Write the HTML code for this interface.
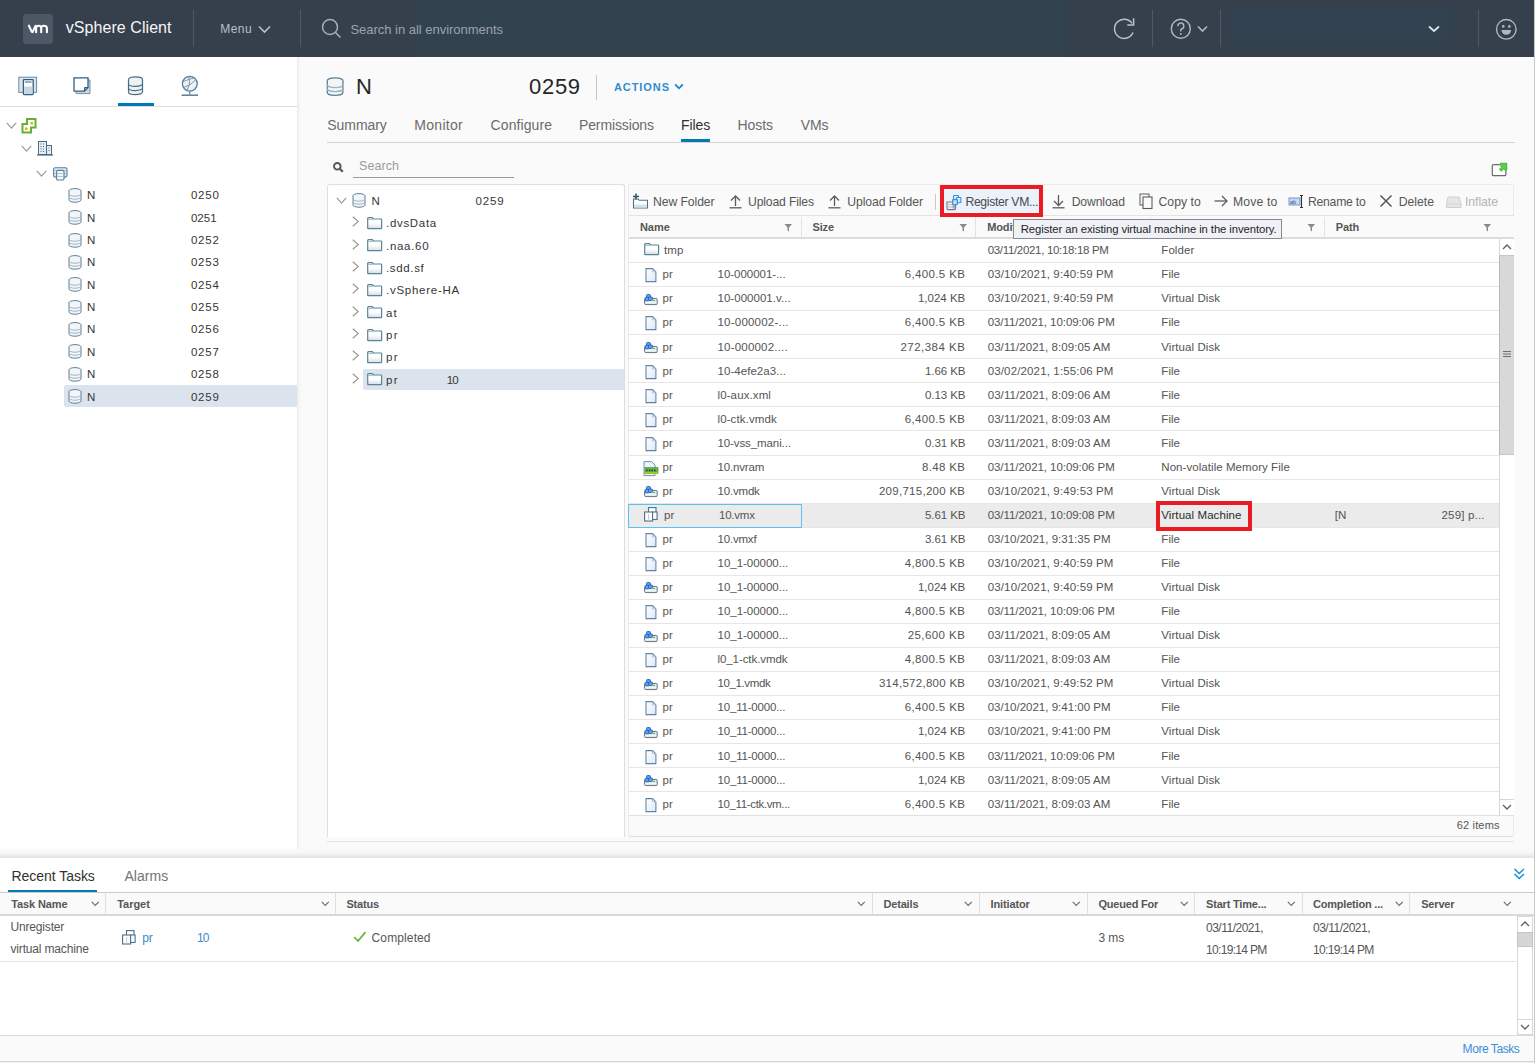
<!DOCTYPE html>
<html><head><meta charset="utf-8"><style>
html,body{margin:0;padding:0;width:1536px;height:1063px;overflow:hidden;background:#fafafa;}
body{position:relative;font-family:"Liberation Sans",sans-serif;}
.t{position:absolute;white-space:nowrap;}
svg{overflow:visible;}
</style></head><body>
<div style="position:absolute;left:0px;top:0px;width:1536px;height:1063px;background:#fafafa;"></div>
<div style="position:absolute;left:0px;top:0px;width:1534px;height:57px;background:#363f4c;"></div>
<div style="position:absolute;left:416px;top:0px;width:652px;height:57px;background:#32424f;"></div>
<div style="position:absolute;left:1534px;top:0px;width:1px;height:1063px;background:#c8c8c8;"></div>
<div style="position:absolute;left:1535px;top:0px;width:1px;height:1063px;background:#ffffff;"></div>
<div style="position:absolute;left:23px;top:14px;width:30px;height:30px;background:#4d5867;border-radius:3px;"></div>
<svg style="position:absolute;left:18px;top:10px" width="40" height="40" viewBox="0 0 40 40"><path d="M10.9,15.6 L13.7,21.6 Q14.2,22.6 14.8,21.6 L17.5,15.9" fill="none" stroke="#fff" stroke-width="2.1" stroke-linecap="round" stroke-linejoin="round"/><path d="M18.1,22.3 V18.2 Q18.1,15.7 20.6,15.7 Q23.2,15.7 23.2,18.2 V22.3 M23.2,18.2 Q23.2,15.7 25.7,15.7 Q28.9,15.7 28.9,18.2 V22.3" fill="none" stroke="#fff" stroke-width="2.1" stroke-linecap="round" stroke-linejoin="round"/></svg>
<div class="t" style="left:65.70px;top:19.86px;font-size:16px;line-height:16px;color:#f5f6f7;letter-spacing:0.067px;">vSphere Client</div>
<div style="position:absolute;left:193px;top:10px;width:1px;height:37px;background:#4e5966;"></div>
<div class="t" style="left:220.20px;top:23.24px;font-size:12px;line-height:12px;color:#b9c0c7;letter-spacing:0.486px;">Menu</div>
<svg style="position:absolute;left:258px;top:25px" width="14" height="9" viewBox="0 0 14 9"><polyline points="1,1.5 6.5,7 12,1.5" fill="none" stroke="#b9c0c7" stroke-width="1.6"/></svg>
<div style="position:absolute;left:299.5px;top:10px;width:1px;height:37px;background:#4e5966;"></div>
<svg style="position:absolute;left:321px;top:18px" width="21" height="21" viewBox="0 0 21 21"><circle cx="9" cy="9" r="7.5" fill="none" stroke="#a7b0b9" stroke-width="1.5"/><line x1="14.5" y1="14.5" x2="19.5" y2="19.5" stroke="#a7b0b9" stroke-width="1.5"/></svg>
<div class="t" style="left:350.40px;top:22.75px;font-size:13px;line-height:13px;color:#9aa4ae;letter-spacing:-0.021px;">Search in all environments</div>
<svg style="position:absolute;left:1113px;top:17px" width="24" height="24" viewBox="0 0 24 24"><path d="M20,15.5 A9.6,9.6 0 1 1 19.1,6.4" fill="none" stroke="#b9c1c9" stroke-width="1.5"/><polyline points="14.3,8 20.6,8 20.6,1.2" fill="none" stroke="#b9c1c9" stroke-width="1.5"/></svg>
<div style="position:absolute;left:1152px;top:10px;width:1px;height:37px;background:#4e5966;"></div>
<svg style="position:absolute;left:1170px;top:18px" width="22" height="22" viewBox="0 0 22 22"><circle cx="10.8" cy="10.8" r="9.5" fill="none" stroke="#b0b7bf" stroke-width="1.4"/><path d="M7.8,8.2 A3,3 0 1 1 11.5,11 L10.8,11.6 L10.8,13.5" fill="none" stroke="#b0b7bf" stroke-width="1.4"/><circle cx="10.8" cy="16" r="0.9" fill="#b0b7bf"/></svg>
<svg style="position:absolute;left:1197px;top:25px" width="12" height="8" viewBox="0 0 12 8"><polyline points="1,1.5 5.5,6 10,1.5" fill="none" stroke="#b0b7bf" stroke-width="1.6"/></svg>
<div style="position:absolute;left:1220px;top:10px;width:1px;height:37px;background:#4e5966;"></div>
<div style="position:absolute;left:1230px;top:9px;width:223px;height:36px;background:#334250;"></div>
<svg style="position:absolute;left:1428px;top:25px" width="13" height="8" viewBox="0 0 13 8"><polyline points="1,1.5 6,6 11,1.5" fill="none" stroke="#dfe3e7" stroke-width="1.7"/></svg>
<div style="position:absolute;left:1477.5px;top:10px;width:1px;height:37px;background:#4e5966;"></div>
<svg style="position:absolute;left:1495px;top:17.7px" width="23" height="23" viewBox="0 0 23 23"><circle cx="11.3" cy="11.3" r="9.8" fill="none" stroke="#b0b7bf" stroke-width="1.4"/><circle cx="8.3" cy="8.4" r="1.3" fill="#b0b7bf"/><circle cx="14.3" cy="8.4" r="1.3" fill="#b0b7bf"/><path d="M6.5,12 L16.1,12 A4.8,4.8 0 0 1 6.5,12 Z" fill="#b0b7bf"/></svg>
<div style="position:absolute;left:0px;top:57px;width:297px;height:798px;background:#ffffff;"></div>
<div style="position:absolute;left:297px;top:57px;width:1px;height:798px;background:#ececec;"></div>
<div style="position:absolute;left:298px;top:57px;width:1.5px;height:798px;background:#f4f4f4;"></div>
<svg style="position:absolute;left:18px;top:76px" width="20" height="20" viewBox="0 0 20 20"><rect x="0.8" y="1.2" width="17.8" height="15.2" fill="#dbe4eb" stroke="#6d8aa0" stroke-width="1"/><rect x="5.4" y="3.6" width="9.8" height="15" rx="0.8" fill="#fff" stroke="#2f5f86" stroke-width="1.3"/><rect x="6.2" y="10.5" width="8.2" height="7.4" fill="#c9d6e0"/><line x1="7" y1="6" x2="13.6" y2="6" stroke="#2f5f86" stroke-width="1"/></svg>
<svg style="position:absolute;left:73px;top:77px" width="18" height="18" viewBox="0 0 18 18"><path d="M3,3 H17 V16.6 H3 Z" fill="#ccd6df" stroke="#6d8aa0" stroke-width="0.9"/><path d="M1,0.8 H15 V10.5 L11.5,14.2 H1 Z" fill="#fff" stroke="#2f5f86" stroke-width="1.3"/><path d="M15,10.5 L11.5,14.2 V10.5 Z" fill="#8ea4b6" stroke="#2f5f86" stroke-width="1"/></svg>
<svg style="position:absolute;left:127px;top:76px" width="18" height="20" viewBox="0 0 18 20"><ellipse cx="8.5" cy="3.5" rx="7" ry="2.6" fill="#eef2f5" stroke="#4a6b85" stroke-width="1.2"/><path d="M1.5,3.5 V16 A7,2.6 0 0 0 15.5,16 V3.5" fill="#eef2f5" stroke="#4a6b85" stroke-width="1.2"/><path d="M1.5,7.8 A7,2.6 0 0 0 15.5,7.8 M1.5,12 A7,2.6 0 0 0 15.5,12" fill="none" stroke="#4a6b85" stroke-width="1.1"/></svg>
<svg style="position:absolute;left:181px;top:75px" width="18" height="22" viewBox="0 0 18 22"><circle cx="8.8" cy="8.7" r="7.4" fill="#eef2f5" stroke="#5a7d97" stroke-width="1.3"/><path d="M2.5,6.5 Q8,4 13.5,2.8 M2.5,12.5 Q9,11 14.5,5 M6,16 Q10,9 8,1.5" fill="none" stroke="#7b97ab" stroke-width="1"/><line x1="8.8" y1="16.5" x2="8.8" y2="19.5" stroke="#5a7d97" stroke-width="1.2"/><line x1="0.6" y1="20.2" x2="17" y2="20.2" stroke="#5a7d97" stroke-width="1.5"/></svg>
<div style="position:absolute;left:118px;top:103px;width:36px;height:3px;background:#0079b8;"></div>
<div style="position:absolute;left:0px;top:106px;width:297px;height:1px;background:#dcdcdc;"></div>
<svg style="position:absolute;left:5.5px;top:122.4px" width="11" height="7" viewBox="0 0 11 7"><polyline points="0.8,0.8 5.5,6.2 10.2,0.8" fill="none" stroke="#9a9a9a" stroke-width="1.2"/></svg>
<svg style="position:absolute;left:21px;top:118px" width="16" height="16" viewBox="0 0 16 16"><path d="M6,1 H14.5 V9.5 H10 V14.5 H1.5 V6 H6 Z" fill="#fff" stroke="#62b22f" stroke-width="2"/><rect x="9.5" y="4" width="2.5" height="2.5" fill="#f5a623"/><rect x="4" y="9.5" width="2.5" height="2.5" fill="#f5a623"/></svg>
<svg style="position:absolute;left:20.5px;top:144.5px" width="11" height="7" viewBox="0 0 11 7"><polyline points="0.8,0.8 5.5,6.2 10.2,0.8" fill="none" stroke="#9a9a9a" stroke-width="1.2"/></svg>
<svg style="position:absolute;left:37px;top:140px" width="16" height="16" viewBox="0 0 16 16"><rect x="1.5" y="1.5" width="8" height="13" fill="#e8eef3" stroke="#4a6b85" stroke-width="1"/><rect x="9.5" y="5.5" width="5" height="9" fill="#e8eef3" stroke="#4a6b85" stroke-width="1"/><path d="M3.5,4 h1 M6,4 h1 M3.5,6.5 h1 M6,6.5 h1 M3.5,9 h1 M6,9 h1 M3.5,11.5 h1 M6,11.5 h1 M11.5,8 h1 M11.5,10.5 h1" stroke="#4a6b85" stroke-width="1"/><line x1="0" y1="15" x2="16" y2="15" stroke="#4a6b85" stroke-width="1.2"/></svg>
<svg style="position:absolute;left:36px;top:169.5px" width="11" height="7" viewBox="0 0 11 7"><polyline points="0.8,0.8 5.5,6.2 10.2,0.8" fill="none" stroke="#9a9a9a" stroke-width="1.2"/></svg>
<svg style="position:absolute;left:53px;top:166.5px" width="15" height="15" viewBox="0 0 15 15"><rect x="0.6" y="0.7" width="13.4" height="9.4" rx="1.6" fill="#e4ebf0" stroke="#557f9b" stroke-width="1.1"/><path d="M1.5,3.6 H13 M1.5,6.6 H13" stroke="#a7bccb" stroke-width="0.9"/><rect x="3.6" y="3.4" width="7.4" height="9.6" rx="1.3" fill="#f4f7f9" stroke="#557f9b" stroke-width="1.1"/><path d="M4.4,6.5 H10.2 M4.4,9.5 H10.2" stroke="#a7bccb" stroke-width="0.9"/></svg>
<div style="position:absolute;left:63.5px;top:385px;width:233.5px;height:22px;background:#dbe3ec;border-radius:2px 0 0 2px;"></div>
<svg style="position:absolute;left:67.5px;top:187.89999999999998px" width="15.0" height="15.0" viewBox="0 0 15 15"><ellipse cx="7" cy="2.8" rx="6" ry="2.2" fill="#f3f6f8" stroke="#5f8197" stroke-width="1"/><path d="M1,2.8 V12 A6,2.2 0 0 0 13,12 V2.8" fill="#f3f6f8" stroke="#5f8197" stroke-width="1"/><path d="M1,6 A6,2.2 0 0 0 13,6 M1,9 A6,2.2 0 0 0 13,9" fill="none" stroke="#9fb4c2" stroke-width="1"/></svg>
<div class="t" style="left:86.90px;top:190.17px;font-size:11.5px;line-height:11.5px;color:#363636;letter-spacing:0.915px;">N</div>
<div class="t" style="left:190.90px;top:190.17px;font-size:11.5px;line-height:11.5px;color:#363636;letter-spacing:0.799px;">0250</div>
<svg style="position:absolute;left:67.5px;top:210.26999999999998px" width="15.0" height="15.0" viewBox="0 0 15 15"><ellipse cx="7" cy="2.8" rx="6" ry="2.2" fill="#f3f6f8" stroke="#5f8197" stroke-width="1"/><path d="M1,2.8 V12 A6,2.2 0 0 0 13,12 V2.8" fill="#f3f6f8" stroke="#5f8197" stroke-width="1"/><path d="M1,6 A6,2.2 0 0 0 13,6 M1,9 A6,2.2 0 0 0 13,9" fill="none" stroke="#9fb4c2" stroke-width="1"/></svg>
<div class="t" style="left:86.90px;top:212.54px;font-size:11.5px;line-height:11.5px;color:#363636;letter-spacing:0.915px;">N</div>
<div class="t" style="left:190.90px;top:212.54px;font-size:11.5px;line-height:11.5px;color:#363636;letter-spacing:0.034px;">0251</div>
<svg style="position:absolute;left:67.5px;top:232.64px" width="15.0" height="15.0" viewBox="0 0 15 15"><ellipse cx="7" cy="2.8" rx="6" ry="2.2" fill="#f3f6f8" stroke="#5f8197" stroke-width="1"/><path d="M1,2.8 V12 A6,2.2 0 0 0 13,12 V2.8" fill="#f3f6f8" stroke="#5f8197" stroke-width="1"/><path d="M1,6 A6,2.2 0 0 0 13,6 M1,9 A6,2.2 0 0 0 13,9" fill="none" stroke="#9fb4c2" stroke-width="1"/></svg>
<div class="t" style="left:86.90px;top:234.91px;font-size:11.5px;line-height:11.5px;color:#363636;letter-spacing:0.915px;">N</div>
<div class="t" style="left:190.90px;top:234.91px;font-size:11.5px;line-height:11.5px;color:#363636;letter-spacing:0.799px;">0252</div>
<svg style="position:absolute;left:67.5px;top:255.01px" width="15.0" height="15.0" viewBox="0 0 15 15"><ellipse cx="7" cy="2.8" rx="6" ry="2.2" fill="#f3f6f8" stroke="#5f8197" stroke-width="1"/><path d="M1,2.8 V12 A6,2.2 0 0 0 13,12 V2.8" fill="#f3f6f8" stroke="#5f8197" stroke-width="1"/><path d="M1,6 A6,2.2 0 0 0 13,6 M1,9 A6,2.2 0 0 0 13,9" fill="none" stroke="#9fb4c2" stroke-width="1"/></svg>
<div class="t" style="left:86.90px;top:257.28px;font-size:11.5px;line-height:11.5px;color:#363636;letter-spacing:0.915px;">N</div>
<div class="t" style="left:190.90px;top:257.28px;font-size:11.5px;line-height:11.5px;color:#363636;letter-spacing:0.799px;">0253</div>
<svg style="position:absolute;left:67.5px;top:277.38px" width="15.0" height="15.0" viewBox="0 0 15 15"><ellipse cx="7" cy="2.8" rx="6" ry="2.2" fill="#f3f6f8" stroke="#5f8197" stroke-width="1"/><path d="M1,2.8 V12 A6,2.2 0 0 0 13,12 V2.8" fill="#f3f6f8" stroke="#5f8197" stroke-width="1"/><path d="M1,6 A6,2.2 0 0 0 13,6 M1,9 A6,2.2 0 0 0 13,9" fill="none" stroke="#9fb4c2" stroke-width="1"/></svg>
<div class="t" style="left:86.90px;top:279.65px;font-size:11.5px;line-height:11.5px;color:#363636;letter-spacing:0.915px;">N</div>
<div class="t" style="left:190.90px;top:279.65px;font-size:11.5px;line-height:11.5px;color:#363636;letter-spacing:0.799px;">0254</div>
<svg style="position:absolute;left:67.5px;top:299.75px" width="15.0" height="15.0" viewBox="0 0 15 15"><ellipse cx="7" cy="2.8" rx="6" ry="2.2" fill="#f3f6f8" stroke="#5f8197" stroke-width="1"/><path d="M1,2.8 V12 A6,2.2 0 0 0 13,12 V2.8" fill="#f3f6f8" stroke="#5f8197" stroke-width="1"/><path d="M1,6 A6,2.2 0 0 0 13,6 M1,9 A6,2.2 0 0 0 13,9" fill="none" stroke="#9fb4c2" stroke-width="1"/></svg>
<div class="t" style="left:86.90px;top:302.02px;font-size:11.5px;line-height:11.5px;color:#363636;letter-spacing:0.915px;">N</div>
<div class="t" style="left:190.90px;top:302.02px;font-size:11.5px;line-height:11.5px;color:#363636;letter-spacing:0.799px;">0255</div>
<svg style="position:absolute;left:67.5px;top:322.11999999999995px" width="15.0" height="15.0" viewBox="0 0 15 15"><ellipse cx="7" cy="2.8" rx="6" ry="2.2" fill="#f3f6f8" stroke="#5f8197" stroke-width="1"/><path d="M1,2.8 V12 A6,2.2 0 0 0 13,12 V2.8" fill="#f3f6f8" stroke="#5f8197" stroke-width="1"/><path d="M1,6 A6,2.2 0 0 0 13,6 M1,9 A6,2.2 0 0 0 13,9" fill="none" stroke="#9fb4c2" stroke-width="1"/></svg>
<div class="t" style="left:86.90px;top:324.39px;font-size:11.5px;line-height:11.5px;color:#363636;letter-spacing:0.915px;">N</div>
<div class="t" style="left:190.90px;top:324.39px;font-size:11.5px;line-height:11.5px;color:#363636;letter-spacing:0.799px;">0256</div>
<svg style="position:absolute;left:67.5px;top:344.48999999999995px" width="15.0" height="15.0" viewBox="0 0 15 15"><ellipse cx="7" cy="2.8" rx="6" ry="2.2" fill="#f3f6f8" stroke="#5f8197" stroke-width="1"/><path d="M1,2.8 V12 A6,2.2 0 0 0 13,12 V2.8" fill="#f3f6f8" stroke="#5f8197" stroke-width="1"/><path d="M1,6 A6,2.2 0 0 0 13,6 M1,9 A6,2.2 0 0 0 13,9" fill="none" stroke="#9fb4c2" stroke-width="1"/></svg>
<div class="t" style="left:86.90px;top:346.76px;font-size:11.5px;line-height:11.5px;color:#363636;letter-spacing:0.915px;">N</div>
<div class="t" style="left:190.90px;top:346.76px;font-size:11.5px;line-height:11.5px;color:#363636;letter-spacing:0.799px;">0257</div>
<svg style="position:absolute;left:67.5px;top:366.85999999999996px" width="15.0" height="15.0" viewBox="0 0 15 15"><ellipse cx="7" cy="2.8" rx="6" ry="2.2" fill="#f3f6f8" stroke="#5f8197" stroke-width="1"/><path d="M1,2.8 V12 A6,2.2 0 0 0 13,12 V2.8" fill="#f3f6f8" stroke="#5f8197" stroke-width="1"/><path d="M1,6 A6,2.2 0 0 0 13,6 M1,9 A6,2.2 0 0 0 13,9" fill="none" stroke="#9fb4c2" stroke-width="1"/></svg>
<div class="t" style="left:86.90px;top:369.13px;font-size:11.5px;line-height:11.5px;color:#363636;letter-spacing:0.915px;">N</div>
<div class="t" style="left:190.90px;top:369.13px;font-size:11.5px;line-height:11.5px;color:#363636;letter-spacing:0.799px;">0258</div>
<svg style="position:absolute;left:67.5px;top:389.22999999999996px" width="15.0" height="15.0" viewBox="0 0 15 15"><ellipse cx="7" cy="2.8" rx="6" ry="2.2" fill="#f3f6f8" stroke="#5f8197" stroke-width="1"/><path d="M1,2.8 V12 A6,2.2 0 0 0 13,12 V2.8" fill="#f3f6f8" stroke="#5f8197" stroke-width="1"/><path d="M1,6 A6,2.2 0 0 0 13,6 M1,9 A6,2.2 0 0 0 13,9" fill="none" stroke="#9fb4c2" stroke-width="1"/></svg>
<div class="t" style="left:86.90px;top:391.50px;font-size:11.5px;line-height:11.5px;color:#363636;letter-spacing:0.915px;">N</div>
<div class="t" style="left:190.90px;top:391.50px;font-size:11.5px;line-height:11.5px;color:#363636;letter-spacing:0.799px;">0259</div>
<svg style="position:absolute;left:326.3px;top:77px" width="19.5" height="19.5" viewBox="0 0 15 15"><ellipse cx="7" cy="2.8" rx="6" ry="2.2" fill="#f3f6f8" stroke="#5f8197" stroke-width="1"/><path d="M1,2.8 V12 A6,2.2 0 0 0 13,12 V2.8" fill="#f3f6f8" stroke="#5f8197" stroke-width="1"/><path d="M1,6 A6,2.2 0 0 0 13,6 M1,9 A6,2.2 0 0 0 13,9" fill="none" stroke="#9fb4c2" stroke-width="1"/></svg>
<div class="t" style="left:356.00px;top:75.88px;font-size:22px;line-height:22px;color:#262626;letter-spacing:-0.428px;">N</div>
<div class="t" style="left:529.00px;top:75.88px;font-size:22px;line-height:22px;color:#262626;letter-spacing:0.705px;">0259</div>
<div style="position:absolute;left:596px;top:75px;width:1px;height:25px;background:#c7c7c7;"></div>
<div class="t" style="left:614.00px;top:82.19px;font-size:11px;line-height:11px;color:#2e8fd0;letter-spacing:0.911px;font-weight:bold;">ACTIONS</div>
<svg style="position:absolute;left:673.5px;top:83px" width="10" height="8" viewBox="0 0 10 8"><polyline points="1.2,1.5 5,5.3 8.8,1.5" fill="none" stroke="#1c87c6" stroke-width="1.8"/></svg>
<div class="t" style="left:327.30px;top:118.35px;font-size:14px;line-height:14px;color:#6b6b6b;letter-spacing:-0.068px;">Summary</div>
<div class="t" style="left:414.30px;top:118.35px;font-size:14px;line-height:14px;color:#6b6b6b;letter-spacing:0.291px;">Monitor</div>
<div class="t" style="left:490.60px;top:118.35px;font-size:14px;line-height:14px;color:#6b6b6b;letter-spacing:0.091px;">Configure</div>
<div class="t" style="left:579.00px;top:118.35px;font-size:14px;line-height:14px;color:#6b6b6b;letter-spacing:-0.129px;">Permissions</div>
<div class="t" style="left:681.10px;top:118.35px;font-size:14px;line-height:14px;color:#303030;letter-spacing:-0.128px;">Files</div>
<div class="t" style="left:737.40px;top:118.35px;font-size:14px;line-height:14px;color:#6b6b6b;letter-spacing:-0.013px;">Hosts</div>
<div class="t" style="left:800.70px;top:118.35px;font-size:14px;line-height:14px;color:#6b6b6b;letter-spacing:-0.093px;">VMs</div>
<div style="position:absolute;left:327px;top:142px;width:1188px;height:1px;background:#d4d4d4;"></div>
<div style="position:absolute;left:681px;top:139px;width:28.5px;height:3px;background:#0079b8;"></div>
<svg style="position:absolute;left:333px;top:162px" width="11" height="11" viewBox="0 0 11 11"><circle cx="4.3" cy="4.3" r="3.3" fill="none" stroke="#565656" stroke-width="1.9"/><line x1="6.8" y1="6.8" x2="9.8" y2="9.8" stroke="#565656" stroke-width="2.2"/></svg>
<div class="t" style="left:359.00px;top:159.82px;font-size:12.5px;line-height:12.5px;color:#9a9a9a;letter-spacing:0.066px;">Search</div>
<div style="position:absolute;left:353px;top:177px;width:161px;height:1px;background:#9a9a9a;"></div>
<svg style="position:absolute;left:1491px;top:162px" width="18" height="16" viewBox="0 0 18 16"><path d="M8.5,2.6 H2.6 Q1.3,2.6 1.3,3.9 V12.4 Q1.3,13.7 2.6,13.7 H13.6 Q14.9,13.7 14.9,12.4 V8.6" fill="#fff" stroke="#6a6a6a" stroke-width="1.2"/><path d="M9.2,1.3 H15.8 V8 L14.3,8.6 L12.6,7 L10.2,9.2 L8.4,7.3 L10.7,5 L9,3.3 Z" fill="#5ccf4a" stroke="#1fa012" stroke-width="0.7"/></svg>
<div style="position:absolute;left:327px;top:184px;width:297.5px;height:653px;background:#ffffff;border:1px solid #dfdfdf;border-bottom:none;border-radius:3px 3px 0 0;box-sizing:border-box;"></div>
<svg style="position:absolute;left:335.6px;top:197px" width="11" height="7" viewBox="0 0 11 7"><polyline points="0.8,0.8 5.5,6.2 10.2,0.8" fill="none" stroke="#9a9a9a" stroke-width="1.2"/></svg>
<svg style="position:absolute;left:351.5px;top:193px" width="15.0" height="15.0" viewBox="0 0 15 15"><ellipse cx="7" cy="2.8" rx="6" ry="2.2" fill="#f3f6f8" stroke="#5f8197" stroke-width="1"/><path d="M1,2.8 V12 A6,2.2 0 0 0 13,12 V2.8" fill="#f3f6f8" stroke="#5f8197" stroke-width="1"/><path d="M1,6 A6,2.2 0 0 0 13,6 M1,9 A6,2.2 0 0 0 13,9" fill="none" stroke="#9fb4c2" stroke-width="1"/></svg>
<div class="t" style="left:371.50px;top:195.87px;font-size:11.5px;line-height:11.5px;color:#363636;letter-spacing:0.915px;">N</div>
<div class="t" style="left:475.60px;top:195.87px;font-size:11.5px;line-height:11.5px;color:#363636;letter-spacing:0.799px;">0259</div>
<div style="position:absolute;left:362.8px;top:368.7px;width:261.2px;height:21.5px;background:#dbe3ec;border-radius:2px 0 0 2px;"></div>
<svg style="position:absolute;left:352.3px;top:216.4px" width="7" height="11" viewBox="0 0 7 11"><polyline points="0.8,0.8 6.2,5.5 0.8,10.2" fill="none" stroke="#9a9a9a" stroke-width="1.2"/></svg>
<svg style="position:absolute;left:366.5px;top:216.9px" width="16" height="13" viewBox="0 0 16 13"><defs><linearGradient id="fdg" x1="0" y1="0" x2="0" y2="1"><stop offset="0.5" stop-color="#ffffff"/><stop offset="1" stop-color="#d3dde5"/></linearGradient></defs><path d="M0.7,2.6 V1.4 Q0.7,0.7 1.4,0.7 H5 Q5.8,0.7 6,1.6 L6.2,2 H14 Q14.6,2 14.6,2.6 V11.2 Q14.6,11.7 14,11.7 H1.3 Q0.7,11.7 0.7,11.2 Z" fill="url(#fdg)" stroke="#5a8598" stroke-width="1.2"/><path d="M1.2,2.4 H5.6" stroke="#a9c0cc" stroke-width="1.2"/></svg>
<div class="t" style="left:386.00px;top:218.37px;font-size:11.5px;line-height:11.5px;color:#363636;letter-spacing:0.692px;">.dvsData</div>
<svg style="position:absolute;left:352.3px;top:238.73000000000002px" width="7" height="11" viewBox="0 0 7 11"><polyline points="0.8,0.8 6.2,5.5 0.8,10.2" fill="none" stroke="#9a9a9a" stroke-width="1.2"/></svg>
<svg style="position:absolute;left:366.5px;top:239.23000000000002px" width="16" height="13" viewBox="0 0 16 13"><defs><linearGradient id="fdg" x1="0" y1="0" x2="0" y2="1"><stop offset="0.5" stop-color="#ffffff"/><stop offset="1" stop-color="#d3dde5"/></linearGradient></defs><path d="M0.7,2.6 V1.4 Q0.7,0.7 1.4,0.7 H5 Q5.8,0.7 6,1.6 L6.2,2 H14 Q14.6,2 14.6,2.6 V11.2 Q14.6,11.7 14,11.7 H1.3 Q0.7,11.7 0.7,11.2 Z" fill="url(#fdg)" stroke="#5a8598" stroke-width="1.2"/><path d="M1.2,2.4 H5.6" stroke="#a9c0cc" stroke-width="1.2"/></svg>
<div class="t" style="left:386.00px;top:240.70px;font-size:11.5px;line-height:11.5px;color:#363636;letter-spacing:0.707px;">.naa.60</div>
<svg style="position:absolute;left:352.3px;top:261.06px" width="7" height="11" viewBox="0 0 7 11"><polyline points="0.8,0.8 6.2,5.5 0.8,10.2" fill="none" stroke="#9a9a9a" stroke-width="1.2"/></svg>
<svg style="position:absolute;left:366.5px;top:261.56px" width="16" height="13" viewBox="0 0 16 13"><defs><linearGradient id="fdg" x1="0" y1="0" x2="0" y2="1"><stop offset="0.5" stop-color="#ffffff"/><stop offset="1" stop-color="#d3dde5"/></linearGradient></defs><path d="M0.7,2.6 V1.4 Q0.7,0.7 1.4,0.7 H5 Q5.8,0.7 6,1.6 L6.2,2 H14 Q14.6,2 14.6,2.6 V11.2 Q14.6,11.7 14,11.7 H1.3 Q0.7,11.7 0.7,11.2 Z" fill="url(#fdg)" stroke="#5a8598" stroke-width="1.2"/><path d="M1.2,2.4 H5.6" stroke="#a9c0cc" stroke-width="1.2"/></svg>
<div class="t" style="left:386.00px;top:263.03px;font-size:11.5px;line-height:11.5px;color:#363636;letter-spacing:0.649px;">.sdd.sf</div>
<svg style="position:absolute;left:352.3px;top:283.39px" width="7" height="11" viewBox="0 0 7 11"><polyline points="0.8,0.8 6.2,5.5 0.8,10.2" fill="none" stroke="#9a9a9a" stroke-width="1.2"/></svg>
<svg style="position:absolute;left:366.5px;top:283.89px" width="16" height="13" viewBox="0 0 16 13"><defs><linearGradient id="fdg" x1="0" y1="0" x2="0" y2="1"><stop offset="0.5" stop-color="#ffffff"/><stop offset="1" stop-color="#d3dde5"/></linearGradient></defs><path d="M0.7,2.6 V1.4 Q0.7,0.7 1.4,0.7 H5 Q5.8,0.7 6,1.6 L6.2,2 H14 Q14.6,2 14.6,2.6 V11.2 Q14.6,11.7 14,11.7 H1.3 Q0.7,11.7 0.7,11.2 Z" fill="url(#fdg)" stroke="#5a8598" stroke-width="1.2"/><path d="M1.2,2.4 H5.6" stroke="#a9c0cc" stroke-width="1.2"/></svg>
<div class="t" style="left:386.00px;top:285.36px;font-size:11.5px;line-height:11.5px;color:#363636;letter-spacing:0.735px;">.vSphere-HA</div>
<svg style="position:absolute;left:352.3px;top:305.72px" width="7" height="11" viewBox="0 0 7 11"><polyline points="0.8,0.8 6.2,5.5 0.8,10.2" fill="none" stroke="#9a9a9a" stroke-width="1.2"/></svg>
<svg style="position:absolute;left:366.5px;top:306.22px" width="16" height="13" viewBox="0 0 16 13"><defs><linearGradient id="fdg" x1="0" y1="0" x2="0" y2="1"><stop offset="0.5" stop-color="#ffffff"/><stop offset="1" stop-color="#d3dde5"/></linearGradient></defs><path d="M0.7,2.6 V1.4 Q0.7,0.7 1.4,0.7 H5 Q5.8,0.7 6,1.6 L6.2,2 H14 Q14.6,2 14.6,2.6 V11.2 Q14.6,11.7 14,11.7 H1.3 Q0.7,11.7 0.7,11.2 Z" fill="url(#fdg)" stroke="#5a8598" stroke-width="1.2"/><path d="M1.2,2.4 H5.6" stroke="#a9c0cc" stroke-width="1.2"/></svg>
<div class="t" style="left:386.00px;top:307.69px;font-size:11.5px;line-height:11.5px;color:#363636;letter-spacing:1.165px;">at</div>
<svg style="position:absolute;left:352.3px;top:328.05px" width="7" height="11" viewBox="0 0 7 11"><polyline points="0.8,0.8 6.2,5.5 0.8,10.2" fill="none" stroke="#9a9a9a" stroke-width="1.2"/></svg>
<svg style="position:absolute;left:366.5px;top:328.55px" width="16" height="13" viewBox="0 0 16 13"><defs><linearGradient id="fdg" x1="0" y1="0" x2="0" y2="1"><stop offset="0.5" stop-color="#ffffff"/><stop offset="1" stop-color="#d3dde5"/></linearGradient></defs><path d="M0.7,2.6 V1.4 Q0.7,0.7 1.4,0.7 H5 Q5.8,0.7 6,1.6 L6.2,2 H14 Q14.6,2 14.6,2.6 V11.2 Q14.6,11.7 14,11.7 H1.3 Q0.7,11.7 0.7,11.2 Z" fill="url(#fdg)" stroke="#5a8598" stroke-width="1.2"/><path d="M1.2,2.4 H5.6" stroke="#a9c0cc" stroke-width="1.2"/></svg>
<div class="t" style="left:386.00px;top:330.02px;font-size:11.5px;line-height:11.5px;color:#363636;letter-spacing:1.247px;">pr</div>
<svg style="position:absolute;left:352.3px;top:350.38px" width="7" height="11" viewBox="0 0 7 11"><polyline points="0.8,0.8 6.2,5.5 0.8,10.2" fill="none" stroke="#9a9a9a" stroke-width="1.2"/></svg>
<svg style="position:absolute;left:366.5px;top:350.88px" width="16" height="13" viewBox="0 0 16 13"><defs><linearGradient id="fdg" x1="0" y1="0" x2="0" y2="1"><stop offset="0.5" stop-color="#ffffff"/><stop offset="1" stop-color="#d3dde5"/></linearGradient></defs><path d="M0.7,2.6 V1.4 Q0.7,0.7 1.4,0.7 H5 Q5.8,0.7 6,1.6 L6.2,2 H14 Q14.6,2 14.6,2.6 V11.2 Q14.6,11.7 14,11.7 H1.3 Q0.7,11.7 0.7,11.2 Z" fill="url(#fdg)" stroke="#5a8598" stroke-width="1.2"/><path d="M1.2,2.4 H5.6" stroke="#a9c0cc" stroke-width="1.2"/></svg>
<div class="t" style="left:386.00px;top:352.35px;font-size:11.5px;line-height:11.5px;color:#363636;letter-spacing:1.247px;">pr</div>
<svg style="position:absolute;left:352.3px;top:372.71000000000004px" width="7" height="11" viewBox="0 0 7 11"><polyline points="0.8,0.8 6.2,5.5 0.8,10.2" fill="none" stroke="#9a9a9a" stroke-width="1.2"/></svg>
<svg style="position:absolute;left:366.5px;top:373.21000000000004px" width="16" height="13" viewBox="0 0 16 13"><defs><linearGradient id="fdg" x1="0" y1="0" x2="0" y2="1"><stop offset="0.5" stop-color="#ffffff"/><stop offset="1" stop-color="#d3dde5"/></linearGradient></defs><path d="M0.7,2.6 V1.4 Q0.7,0.7 1.4,0.7 H5 Q5.8,0.7 6,1.6 L6.2,2 H14 Q14.6,2 14.6,2.6 V11.2 Q14.6,11.7 14,11.7 H1.3 Q0.7,11.7 0.7,11.2 Z" fill="url(#fdg)" stroke="#5a8598" stroke-width="1.2"/><path d="M1.2,2.4 H5.6" stroke="#a9c0cc" stroke-width="1.2"/></svg>
<div class="t" style="left:386.00px;top:374.68px;font-size:11.5px;line-height:11.5px;color:#363636;letter-spacing:1.247px;">pr</div>
<div class="t" style="left:446.70px;top:374.68px;font-size:11.5px;line-height:11.5px;color:#363636;letter-spacing:-0.730px;">10</div>
<div style="position:absolute;left:627.5px;top:184px;width:886.5px;height:653px;background:#fafafa;border:1px solid #ececec;border-bottom:1px solid #dedede;border-radius:0 0 3px 3px;box-sizing:border-box;"></div>
<svg style="position:absolute;left:632px;top:193px" width="17" height="16" viewBox="0 0 17 16"><path d="M1.5,6 H6 L7.3,7.3 H15.5 V15 H1.5 Z" fill="#fff" stroke="#4b7189" stroke-width="1.1"/><rect x="2.2" y="11.5" width="12.6" height="3" fill="#d6e2ea"/><path d="M4,0.5 V6.5 M1,3.5 H7" stroke="#2f4f6a" stroke-width="1.5"/></svg>
<div class="t" style="left:653.00px;top:195.87px;font-size:12.2px;line-height:12.2px;color:#565656;letter-spacing:-0.080px;">New Folder</div>
<svg style="position:absolute;left:729px;top:194px" width="14" height="15" viewBox="0 0 14 15"><polyline points="2,6.5 6.5,2 11,6.5" fill="none" stroke="#5b5b5b" stroke-width="1.3"/><line x1="6.5" y1="2" x2="6.5" y2="12" stroke="#5b5b5b" stroke-width="1.3"/><line x1="0.5" y1="13.8" x2="12.5" y2="13.8" stroke="#5b5b5b" stroke-width="1.3"/></svg>
<div class="t" style="left:748.00px;top:195.87px;font-size:12.2px;line-height:12.2px;color:#565656;letter-spacing:-0.153px;">Upload Files</div>
<svg style="position:absolute;left:828px;top:194px" width="14" height="15" viewBox="0 0 14 15"><polyline points="2,6.5 6.5,2 11,6.5" fill="none" stroke="#5b5b5b" stroke-width="1.3"/><line x1="6.5" y1="2" x2="6.5" y2="12" stroke="#5b5b5b" stroke-width="1.3"/><line x1="0.5" y1="13.8" x2="12.5" y2="13.8" stroke="#5b5b5b" stroke-width="1.3"/></svg>
<div class="t" style="left:847.30px;top:195.87px;font-size:12.2px;line-height:12.2px;color:#565656;letter-spacing:-0.074px;">Upload Folder</div>
<div style="position:absolute;left:934.5px;top:193.5px;width:1px;height:16px;background:#c9c9c9;"></div>
<div style="position:absolute;left:944px;top:189px;width:95px;height:23px;background:#ebf2fb;"></div>
<svg style="position:absolute;left:946px;top:194px" width="17" height="17" viewBox="0 0 17 17"><path d="M1,8 V14.6 Q1,15.6 2,15.6 H8.6 Q9.6,15.6 9.6,14.6 V8 Z" fill="#f2f2f2" stroke="#7a7a7a" stroke-width="1.1"/><path d="M1.5,10.6 H9 M1.5,13 H9" stroke="#bdbdbd" stroke-width="1"/><rect x="7.5" y="1.5" width="5" height="4.6" rx="0.8" fill="#d2ebfb" stroke="#3a8ee0" stroke-width="1.1"/><rect x="10.6" y="3.5" width="4.3" height="5.2" rx="0.8" fill="#d2ebfb" stroke="#3a8ee0" stroke-width="1.1"/><rect x="6.6" y="5.6" width="4.8" height="5" rx="0.8" fill="#c6e3fa" stroke="#3a8ee0" stroke-width="1.2"/><rect x="6.6" y="10.6" width="2.5" height="4" fill="#6e9fd0" opacity="0.7"/></svg>
<div class="t" style="left:965.40px;top:195.87px;font-size:12.2px;line-height:12.2px;color:#4a4a4a;letter-spacing:-0.315px;">Register VM...</div>
<svg style="position:absolute;left:1052px;top:194px" width="14" height="15" viewBox="0 0 14 15"><polyline points="2,7 6.5,11.5 11,7" fill="none" stroke="#5b5b5b" stroke-width="1.3"/><line x1="6.5" y1="1" x2="6.5" y2="11.5" stroke="#5b5b5b" stroke-width="1.3"/><line x1="0.5" y1="13.8" x2="12.5" y2="13.8" stroke="#5b5b5b" stroke-width="1.3"/></svg>
<div class="t" style="left:1071.70px;top:195.87px;font-size:12.2px;line-height:12.2px;color:#565656;letter-spacing:-0.123px;">Download</div>
<svg style="position:absolute;left:1139px;top:193px" width="15" height="17" viewBox="0 0 15 17"><rect x="1" y="1" width="9" height="11" fill="none" stroke="#5b5b5b" stroke-width="1"/><rect x="4" y="4" width="9" height="11.5" fill="#fafafa" stroke="#5b5b5b" stroke-width="1.1"/></svg>
<div class="t" style="left:1158.50px;top:195.87px;font-size:12.2px;line-height:12.2px;color:#565656;letter-spacing:0.033px;">Copy to</div>
<svg style="position:absolute;left:1214px;top:195px" width="15" height="12" viewBox="0 0 15 12"><line x1="0.5" y1="6" x2="13" y2="6" stroke="#5b5b5b" stroke-width="1.3"/><polyline points="8,1 13,6 8,11" fill="none" stroke="#5b5b5b" stroke-width="1.3"/></svg>
<div class="t" style="left:1233.00px;top:195.87px;font-size:12.2px;line-height:12.2px;color:#565656;letter-spacing:0.140px;">Move to</div>
<svg style="position:absolute;left:1288px;top:194px" width="17" height="15" viewBox="0 0 17 15"><rect x="1" y="4" width="11" height="7" fill="#c9d9f1" stroke="#6a8fc9" stroke-width="0.9"/><text x="2" y="10" font-size="5.5" fill="#2c5aa0" font-family="Liberation Sans">ab</text><path d="M12,1.5 H15 M13.5,1.5 V13.5 M12,13.5 H15" stroke="#333" stroke-width="1.1"/></svg>
<div class="t" style="left:1308.00px;top:195.87px;font-size:12.2px;line-height:12.2px;color:#565656;letter-spacing:-0.245px;">Rename to</div>
<svg style="position:absolute;left:1379px;top:194px" width="15" height="15" viewBox="0 0 15 15"><path d="M1.5,1.5 L12.5,12.5 M12.5,1.5 L1.5,12.5" stroke="#555" stroke-width="1.5"/></svg>
<div class="t" style="left:1398.70px;top:195.87px;font-size:12.2px;line-height:12.2px;color:#565656;letter-spacing:0.002px;">Delete</div>
<svg style="position:absolute;left:1446px;top:195px" width="16" height="14" viewBox="0 0 16 14"><path d="M2,2 H13 L15,9 V12.5 H0.5 V9 Z" fill="#e6e6e6" stroke="#cfcfcf" stroke-width="1"/><line x1="0.5" y1="9" x2="15" y2="9" stroke="#d5d5d5"/></svg>
<div class="t" style="left:1465.00px;top:195.87px;font-size:12.2px;line-height:12.2px;color:#b4b4b4;letter-spacing:-0.037px;">Inflate</div>
<div style="position:absolute;left:629px;top:215px;width:885px;height:1px;background:#e3e3e3;"></div>
<div style="position:absolute;left:629px;top:216px;width:885px;height:22px;background:#fafafa;"></div>
<div style="position:absolute;left:629px;top:237px;width:885px;height:2px;background:#dcdcdc;"></div>
<div class="t" style="left:640.00px;top:221.69px;font-size:11px;line-height:11px;color:#565656;letter-spacing:-0.070px;font-weight:bold;">Name</div>
<svg style="position:absolute;left:784px;top:223px" width="9" height="9" viewBox="0 0 9 9"><path d="M0.5,1 H8 L5,4.5 V8.5 L3.5,7.5 V4.5 Z" fill="#8a8a8a"/></svg>
<div style="position:absolute;left:801px;top:217px;width:1px;height:20px;background:#e3e3e3;"></div>
<div class="t" style="left:812.50px;top:221.69px;font-size:11px;line-height:11px;color:#565656;letter-spacing:-0.165px;font-weight:bold;">Size</div>
<svg style="position:absolute;left:958.5px;top:223px" width="9" height="9" viewBox="0 0 9 9"><path d="M0.5,1 H8 L5,4.5 V8.5 L3.5,7.5 V4.5 Z" fill="#8a8a8a"/></svg>
<div style="position:absolute;left:975px;top:217px;width:1px;height:20px;background:#e3e3e3;"></div>
<div class="t" style="left:987.30px;top:221.69px;font-size:11px;line-height:11px;color:#565656;letter-spacing:-0.170px;font-weight:bold;">Modified</div>
<div style="position:absolute;left:1149.5px;top:217px;width:1px;height:20px;background:#e3e3e3;"></div>
<svg style="position:absolute;left:1306.5px;top:223px" width="9" height="9" viewBox="0 0 9 9"><path d="M0.5,1 H8 L5,4.5 V8.5 L3.5,7.5 V4.5 Z" fill="#8a8a8a"/></svg>
<div style="position:absolute;left:1324px;top:217px;width:1px;height:20px;background:#e3e3e3;"></div>
<div class="t" style="left:1335.80px;top:221.69px;font-size:11px;line-height:11px;color:#565656;letter-spacing:-0.179px;font-weight:bold;">Path</div>
<svg style="position:absolute;left:1482.5px;top:223px" width="9" height="9" viewBox="0 0 9 9"><path d="M0.5,1 H8 L5,4.5 V8.5 L3.5,7.5 V4.5 Z" fill="#8a8a8a"/></svg>
<div style="position:absolute;left:940px;top:185px;width:103px;height:31.5px;background:transparent;border:4.5px solid #ea1b23;box-sizing:border-box;"></div>
<div style="position:absolute;left:629px;top:239px;width:870px;height:576px;background:#ffffff;"></div>
<div style="position:absolute;left:629px;top:262.06px;width:870px;height:1px;background:#e6e6e6;"></div>
<svg style="position:absolute;left:643.5px;top:243.2px" width="16" height="13" viewBox="0 0 16 13"><defs><linearGradient id="fdg" x1="0" y1="0" x2="0" y2="1"><stop offset="0.5" stop-color="#ffffff"/><stop offset="1" stop-color="#d3dde5"/></linearGradient></defs><path d="M0.7,2.6 V1.4 Q0.7,0.7 1.4,0.7 H5 Q5.8,0.7 6,1.6 L6.2,2 H14 Q14.6,2 14.6,2.6 V11.2 Q14.6,11.7 14,11.7 H1.3 Q0.7,11.7 0.7,11.2 Z" fill="url(#fdg)" stroke="#5a8598" stroke-width="1.2"/><path d="M1.2,2.4 H5.6" stroke="#a9c0cc" stroke-width="1.2"/></svg>
<div class="t" style="left:664.00px;top:245.27px;font-size:11.5px;line-height:11.5px;color:#545454;letter-spacing:0.078px;">tmp</div>
<div class="t" style="left:987.70px;top:245.27px;font-size:11.5px;line-height:11.5px;color:#545454;letter-spacing:-0.324px;">03/11/2021, 10:18:18 PM</div>
<div class="t" style="left:1161.30px;top:245.27px;font-size:11.5px;line-height:11.5px;color:#545454;letter-spacing:0.066px;">Folder</div>
<div style="position:absolute;left:629px;top:286.12px;width:870px;height:1px;background:#e6e6e6;"></div>
<svg style="position:absolute;left:644.5px;top:268.36px" width="13" height="15" viewBox="0 0 13 15"><defs><linearGradient id="fg" x1="0" y1="0" x2="1" y2="1"><stop offset="0" stop-color="#ffffff"/><stop offset="1" stop-color="#dce9f7"/></linearGradient></defs><path d="M1,0.6 H7.6 L10.9,3.9 V13.6 H1 Z" fill="url(#fg)" stroke="#6482a3" stroke-width="1.05"/><path d="M7.6,0.9 V3.9 H10.6" fill="none" stroke="#a9bdd0" stroke-width="0.9"/></svg>
<div class="t" style="left:662.50px;top:269.33px;font-size:11.5px;line-height:11.5px;color:#545454;letter-spacing:0.062px;">pr</div>
<div class="t" style="left:717.50px;top:269.33px;font-size:11.5px;line-height:11.5px;color:#545454;letter-spacing:-0.016px;">10-000001-...</div>
<div class="t" style="left:904.63px;top:269.33px;font-size:11.5px;line-height:11.5px;color:#545454;letter-spacing:0.376px;">6,400.5 KB</div>
<div class="t" style="left:987.70px;top:269.33px;font-size:11.5px;line-height:11.5px;color:#545454;letter-spacing:0.142px;">03/10/2021, 9:40:59 PM</div>
<div class="t" style="left:1161.30px;top:269.33px;font-size:11.5px;line-height:11.5px;color:#545454;letter-spacing:0.056px;">File</div>
<div style="position:absolute;left:629px;top:310.18px;width:870px;height:1px;background:#e6e6e6;"></div>
<svg style="position:absolute;left:643.6px;top:293.71999999999997px" width="15" height="12" viewBox="0 0 15 12"><rect x="0.6" y="4.4" width="12.6" height="6.2" rx="1.2" fill="#e6e6e6" stroke="#68717b" stroke-width="1"/><line x1="1.5" y1="8.4" x2="12.3" y2="8.4" stroke="#fafafa" stroke-width="1"/><rect x="9" y="5.8" width="2" height="1.3" fill="#66c24a"/><rect x="2.6" y="0.5" width="3.8" height="3.5" rx="0.8" fill="#5aa2ea" stroke="#1f64c0" stroke-width="0.9"/><rect x="1.1" y="3.3" width="3.8" height="3.5" rx="0.8" fill="#5aa2ea" stroke="#1f64c0" stroke-width="0.9"/><rect x="4.6" y="3" width="3.8" height="3.5" rx="0.8" fill="#5aa2ea" stroke="#1f64c0" stroke-width="0.9"/></svg>
<div class="t" style="left:662.50px;top:293.39px;font-size:11.5px;line-height:11.5px;color:#545454;letter-spacing:0.062px;">pr</div>
<div class="t" style="left:717.50px;top:293.39px;font-size:11.5px;line-height:11.5px;color:#545454;letter-spacing:0.033px;">10-000001.v...</div>
<div class="t" style="left:917.88px;top:293.39px;font-size:11.5px;line-height:11.5px;color:#545454;letter-spacing:0.013px;">1,024 KB</div>
<div class="t" style="left:987.70px;top:293.39px;font-size:11.5px;line-height:11.5px;color:#545454;letter-spacing:0.142px;">03/10/2021, 9:40:59 PM</div>
<div class="t" style="left:1161.30px;top:293.39px;font-size:11.5px;line-height:11.5px;color:#545454;letter-spacing:0.071px;">Virtual Disk</div>
<div style="position:absolute;left:629px;top:334.24px;width:870px;height:1px;background:#e6e6e6;"></div>
<svg style="position:absolute;left:644.5px;top:316.48px" width="13" height="15" viewBox="0 0 13 15"><defs><linearGradient id="fg" x1="0" y1="0" x2="1" y2="1"><stop offset="0" stop-color="#ffffff"/><stop offset="1" stop-color="#dce9f7"/></linearGradient></defs><path d="M1,0.6 H7.6 L10.9,3.9 V13.6 H1 Z" fill="url(#fg)" stroke="#6482a3" stroke-width="1.05"/><path d="M7.6,0.9 V3.9 H10.6" fill="none" stroke="#a9bdd0" stroke-width="0.9"/></svg>
<div class="t" style="left:662.50px;top:317.45px;font-size:11.5px;line-height:11.5px;color:#545454;letter-spacing:0.062px;">pr</div>
<div class="t" style="left:717.50px;top:317.45px;font-size:11.5px;line-height:11.5px;color:#545454;letter-spacing:0.219px;">10-000002-...</div>
<div class="t" style="left:904.63px;top:317.45px;font-size:11.5px;line-height:11.5px;color:#545454;letter-spacing:0.376px;">6,400.5 KB</div>
<div class="t" style="left:987.70px;top:317.45px;font-size:11.5px;line-height:11.5px;color:#545454;letter-spacing:-0.058px;">03/11/2021, 10:09:06 PM</div>
<div class="t" style="left:1161.30px;top:317.45px;font-size:11.5px;line-height:11.5px;color:#545454;letter-spacing:0.056px;">File</div>
<div style="position:absolute;left:629px;top:358.3px;width:870px;height:1px;background:#e6e6e6;"></div>
<svg style="position:absolute;left:643.6px;top:341.84px" width="15" height="12" viewBox="0 0 15 12"><rect x="0.6" y="4.4" width="12.6" height="6.2" rx="1.2" fill="#e6e6e6" stroke="#68717b" stroke-width="1"/><line x1="1.5" y1="8.4" x2="12.3" y2="8.4" stroke="#fafafa" stroke-width="1"/><rect x="9" y="5.8" width="2" height="1.3" fill="#66c24a"/><rect x="2.6" y="0.5" width="3.8" height="3.5" rx="0.8" fill="#5aa2ea" stroke="#1f64c0" stroke-width="0.9"/><rect x="1.1" y="3.3" width="3.8" height="3.5" rx="0.8" fill="#5aa2ea" stroke="#1f64c0" stroke-width="0.9"/><rect x="4.6" y="3" width="3.8" height="3.5" rx="0.8" fill="#5aa2ea" stroke="#1f64c0" stroke-width="0.9"/></svg>
<div class="t" style="left:662.50px;top:341.51px;font-size:11.5px;line-height:11.5px;color:#545454;letter-spacing:0.062px;">pr</div>
<div class="t" style="left:717.50px;top:341.51px;font-size:11.5px;line-height:11.5px;color:#545454;letter-spacing:0.200px;">10-000002....</div>
<div class="t" style="left:900.44px;top:341.51px;font-size:11.5px;line-height:11.5px;color:#545454;letter-spacing:0.476px;">272,384 KB</div>
<div class="t" style="left:987.70px;top:341.51px;font-size:11.5px;line-height:11.5px;color:#545454;letter-spacing:0.070px;">03/11/2021, 8:09:05 AM</div>
<div class="t" style="left:1161.30px;top:341.51px;font-size:11.5px;line-height:11.5px;color:#545454;letter-spacing:0.071px;">Virtual Disk</div>
<div style="position:absolute;left:629px;top:382.36px;width:870px;height:1px;background:#e6e6e6;"></div>
<svg style="position:absolute;left:644.5px;top:364.6px" width="13" height="15" viewBox="0 0 13 15"><defs><linearGradient id="fg" x1="0" y1="0" x2="1" y2="1"><stop offset="0" stop-color="#ffffff"/><stop offset="1" stop-color="#dce9f7"/></linearGradient></defs><path d="M1,0.6 H7.6 L10.9,3.9 V13.6 H1 Z" fill="url(#fg)" stroke="#6482a3" stroke-width="1.05"/><path d="M7.6,0.9 V3.9 H10.6" fill="none" stroke="#a9bdd0" stroke-width="0.9"/></svg>
<div class="t" style="left:662.50px;top:365.57px;font-size:11.5px;line-height:11.5px;color:#545454;letter-spacing:0.062px;">pr</div>
<div class="t" style="left:717.50px;top:365.57px;font-size:11.5px;line-height:11.5px;color:#545454;letter-spacing:0.052px;">10-4efe2a3...</div>
<div class="t" style="left:925.08px;top:365.57px;font-size:11.5px;line-height:11.5px;color:#545454;letter-spacing:-0.099px;">1.66 KB</div>
<div class="t" style="left:987.70px;top:365.57px;font-size:11.5px;line-height:11.5px;color:#545454;letter-spacing:0.142px;">03/02/2021, 1:55:06 PM</div>
<div class="t" style="left:1161.30px;top:365.57px;font-size:11.5px;line-height:11.5px;color:#545454;letter-spacing:0.056px;">File</div>
<div style="position:absolute;left:629px;top:406.42px;width:870px;height:1px;background:#e6e6e6;"></div>
<svg style="position:absolute;left:644.5px;top:388.65999999999997px" width="13" height="15" viewBox="0 0 13 15"><defs><linearGradient id="fg" x1="0" y1="0" x2="1" y2="1"><stop offset="0" stop-color="#ffffff"/><stop offset="1" stop-color="#dce9f7"/></linearGradient></defs><path d="M1,0.6 H7.6 L10.9,3.9 V13.6 H1 Z" fill="url(#fg)" stroke="#6482a3" stroke-width="1.05"/><path d="M7.6,0.9 V3.9 H10.6" fill="none" stroke="#a9bdd0" stroke-width="0.9"/></svg>
<div class="t" style="left:662.50px;top:389.63px;font-size:11.5px;line-height:11.5px;color:#545454;letter-spacing:0.062px;">pr</div>
<div class="t" style="left:717.50px;top:389.63px;font-size:11.5px;line-height:11.5px;color:#545454;letter-spacing:0.113px;">l0-aux.xml</div>
<div class="t" style="left:925.08px;top:389.63px;font-size:11.5px;line-height:11.5px;color:#545454;letter-spacing:-0.099px;">0.13 KB</div>
<div class="t" style="left:987.70px;top:389.63px;font-size:11.5px;line-height:11.5px;color:#545454;letter-spacing:0.070px;">03/11/2021, 8:09:06 AM</div>
<div class="t" style="left:1161.30px;top:389.63px;font-size:11.5px;line-height:11.5px;color:#545454;letter-spacing:0.056px;">File</div>
<div style="position:absolute;left:629px;top:430.47999999999996px;width:870px;height:1px;background:#e6e6e6;"></div>
<svg style="position:absolute;left:644.5px;top:412.72px" width="13" height="15" viewBox="0 0 13 15"><defs><linearGradient id="fg" x1="0" y1="0" x2="1" y2="1"><stop offset="0" stop-color="#ffffff"/><stop offset="1" stop-color="#dce9f7"/></linearGradient></defs><path d="M1,0.6 H7.6 L10.9,3.9 V13.6 H1 Z" fill="url(#fg)" stroke="#6482a3" stroke-width="1.05"/><path d="M7.6,0.9 V3.9 H10.6" fill="none" stroke="#a9bdd0" stroke-width="0.9"/></svg>
<div class="t" style="left:662.50px;top:413.69px;font-size:11.5px;line-height:11.5px;color:#545454;letter-spacing:0.062px;">pr</div>
<div class="t" style="left:717.50px;top:413.69px;font-size:11.5px;line-height:11.5px;color:#545454;letter-spacing:0.109px;">l0-ctk.vmdk</div>
<div class="t" style="left:904.63px;top:413.69px;font-size:11.5px;line-height:11.5px;color:#545454;letter-spacing:0.376px;">6,400.5 KB</div>
<div class="t" style="left:987.70px;top:413.69px;font-size:11.5px;line-height:11.5px;color:#545454;letter-spacing:0.070px;">03/11/2021, 8:09:03 AM</div>
<div class="t" style="left:1161.30px;top:413.69px;font-size:11.5px;line-height:11.5px;color:#545454;letter-spacing:0.056px;">File</div>
<div style="position:absolute;left:629px;top:454.54px;width:870px;height:1px;background:#e6e6e6;"></div>
<svg style="position:absolute;left:644.5px;top:436.78px" width="13" height="15" viewBox="0 0 13 15"><defs><linearGradient id="fg" x1="0" y1="0" x2="1" y2="1"><stop offset="0" stop-color="#ffffff"/><stop offset="1" stop-color="#dce9f7"/></linearGradient></defs><path d="M1,0.6 H7.6 L10.9,3.9 V13.6 H1 Z" fill="url(#fg)" stroke="#6482a3" stroke-width="1.05"/><path d="M7.6,0.9 V3.9 H10.6" fill="none" stroke="#a9bdd0" stroke-width="0.9"/></svg>
<div class="t" style="left:662.50px;top:437.75px;font-size:11.5px;line-height:11.5px;color:#545454;letter-spacing:0.062px;">pr</div>
<div class="t" style="left:717.50px;top:437.75px;font-size:11.5px;line-height:11.5px;color:#545454;letter-spacing:-0.100px;">10-vss_mani...</div>
<div class="t" style="left:925.08px;top:437.75px;font-size:11.5px;line-height:11.5px;color:#545454;letter-spacing:-0.099px;">0.31 KB</div>
<div class="t" style="left:987.70px;top:437.75px;font-size:11.5px;line-height:11.5px;color:#545454;letter-spacing:0.070px;">03/11/2021, 8:09:03 AM</div>
<div class="t" style="left:1161.30px;top:437.75px;font-size:11.5px;line-height:11.5px;color:#545454;letter-spacing:0.056px;">File</div>
<div style="position:absolute;left:629px;top:478.59999999999997px;width:870px;height:1px;background:#e6e6e6;"></div>
<svg style="position:absolute;left:642.5px;top:460.84000000000003px" width="16" height="16" viewBox="0 0 16 16"><path d="M1,0.6 H8.6 L12,4 V14.6 H1 Z" fill="#eef4fb" stroke="#7390ae" stroke-width="1"/><rect x="2" y="6.6" width="13" height="6" fill="#5cb84a" stroke="#3b8a2c" stroke-width="0.6"/><rect x="2" y="11.2" width="13" height="1.5" fill="#c8c21c"/><path d="M4,8.6 v1.6 M6.6,8.6 v1.6 M9.2,8.6 v1.6 M11.8,8.6 v1.6" stroke="#1e3d17" stroke-width="1.3"/></svg>
<div class="t" style="left:662.50px;top:461.81px;font-size:11.5px;line-height:11.5px;color:#545454;letter-spacing:0.062px;">pr</div>
<div class="t" style="left:717.50px;top:461.81px;font-size:11.5px;line-height:11.5px;color:#545454;letter-spacing:-0.158px;">10.nvram</div>
<div class="t" style="left:922.02px;top:461.81px;font-size:11.5px;line-height:11.5px;color:#545454;letter-spacing:0.337px;">8.48 KB</div>
<div class="t" style="left:987.70px;top:461.81px;font-size:11.5px;line-height:11.5px;color:#545454;letter-spacing:-0.058px;">03/11/2021, 10:09:06 PM</div>
<div class="t" style="left:1161.30px;top:461.81px;font-size:11.5px;line-height:11.5px;color:#545454;letter-spacing:0.059px;">Non-volatile Memory File</div>
<div style="position:absolute;left:629px;top:502.66px;width:870px;height:1px;background:#e6e6e6;"></div>
<svg style="position:absolute;left:643.6px;top:486.19999999999993px" width="15" height="12" viewBox="0 0 15 12"><rect x="0.6" y="4.4" width="12.6" height="6.2" rx="1.2" fill="#e6e6e6" stroke="#68717b" stroke-width="1"/><line x1="1.5" y1="8.4" x2="12.3" y2="8.4" stroke="#fafafa" stroke-width="1"/><rect x="9" y="5.8" width="2" height="1.3" fill="#66c24a"/><rect x="2.6" y="0.5" width="3.8" height="3.5" rx="0.8" fill="#5aa2ea" stroke="#1f64c0" stroke-width="0.9"/><rect x="1.1" y="3.3" width="3.8" height="3.5" rx="0.8" fill="#5aa2ea" stroke="#1f64c0" stroke-width="0.9"/><rect x="4.6" y="3" width="3.8" height="3.5" rx="0.8" fill="#5aa2ea" stroke="#1f64c0" stroke-width="0.9"/></svg>
<div class="t" style="left:662.50px;top:485.87px;font-size:11.5px;line-height:11.5px;color:#545454;letter-spacing:0.062px;">pr</div>
<div class="t" style="left:717.50px;top:485.87px;font-size:11.5px;line-height:11.5px;color:#545454;letter-spacing:-0.188px;">10.vmdk</div>
<div class="t" style="left:878.91px;top:485.87px;font-size:11.5px;line-height:11.5px;color:#545454;letter-spacing:0.279px;">209,715,200 KB</div>
<div class="t" style="left:987.70px;top:485.87px;font-size:11.5px;line-height:11.5px;color:#545454;letter-spacing:0.142px;">03/10/2021, 9:49:53 PM</div>
<div class="t" style="left:1161.30px;top:485.87px;font-size:11.5px;line-height:11.5px;color:#545454;letter-spacing:0.071px;">Virtual Disk</div>
<div style="position:absolute;left:629px;top:504.15999999999997px;width:870px;height:23.56px;background:#ebebeb;"></div>
<div style="position:absolute;left:629px;top:526.7199999999999px;width:870px;height:1px;background:#e6e6e6;"></div>
<svg style="position:absolute;left:643.5px;top:506.8599999999999px" width="15" height="15" viewBox="0 0 15 15"><rect x="4.5" y="0.6" width="7.5" height="7" fill="#fff" stroke="#4d7090" stroke-width="1.1"/><rect x="0.6" y="5" width="8" height="9" fill="#fff" stroke="#4d7090" stroke-width="1.1"/><rect x="8.6" y="5" width="4.5" height="7.5" fill="#fff" stroke="#4d7090" stroke-width="1.1"/><line x1="4.6" y1="7" x2="4.6" y2="14" stroke="#bbb" stroke-width="0.8"/></svg>
<div class="t" style="left:664.00px;top:509.93px;font-size:11.5px;line-height:11.5px;color:#545454;letter-spacing:0.062px;">pr</div>
<div class="t" style="left:719.00px;top:509.93px;font-size:11.5px;line-height:11.5px;color:#545454;letter-spacing:-0.233px;">10.vmx</div>
<div class="t" style="left:925.08px;top:509.93px;font-size:11.5px;line-height:11.5px;color:#545454;letter-spacing:-0.099px;">5.61 KB</div>
<div class="t" style="left:987.70px;top:509.93px;font-size:11.5px;line-height:11.5px;color:#545454;letter-spacing:-0.058px;">03/11/2021, 10:09:08 PM</div>
<div class="t" style="left:1161.30px;top:509.93px;font-size:11.5px;line-height:11.5px;color:#2c2c2c;letter-spacing:0.074px;">Virtual Machine</div>
<div style="position:absolute;left:628.3px;top:504.15999999999997px;width:174px;height:23.5px;background:transparent;border:1.5px solid #5ac2ef;box-sizing:border-box;"></div>
<div class="t" style="left:1334.70px;top:509.93px;font-size:11.5px;line-height:11.5px;color:#545454;letter-spacing:0.070px;">[N</div>
<div class="t" style="left:1441.50px;top:509.93px;font-size:11.5px;line-height:11.5px;color:#545454;letter-spacing:0.174px;">259] p...</div>
<div style="position:absolute;left:1156px;top:501px;width:95.5px;height:30px;background:transparent;border:4.3px solid #ea1b23;box-sizing:border-box;"></div>
<div style="position:absolute;left:629px;top:550.78px;width:870px;height:1px;background:#e6e6e6;"></div>
<svg style="position:absolute;left:644.5px;top:533.02px" width="13" height="15" viewBox="0 0 13 15"><defs><linearGradient id="fg" x1="0" y1="0" x2="1" y2="1"><stop offset="0" stop-color="#ffffff"/><stop offset="1" stop-color="#dce9f7"/></linearGradient></defs><path d="M1,0.6 H7.6 L10.9,3.9 V13.6 H1 Z" fill="url(#fg)" stroke="#6482a3" stroke-width="1.05"/><path d="M7.6,0.9 V3.9 H10.6" fill="none" stroke="#a9bdd0" stroke-width="0.9"/></svg>
<div class="t" style="left:662.50px;top:533.99px;font-size:11.5px;line-height:11.5px;color:#545454;letter-spacing:0.062px;">pr</div>
<div class="t" style="left:717.50px;top:533.99px;font-size:11.5px;line-height:11.5px;color:#545454;letter-spacing:-0.194px;">10.vmxf</div>
<div class="t" style="left:925.08px;top:533.99px;font-size:11.5px;line-height:11.5px;color:#545454;letter-spacing:-0.099px;">3.61 KB</div>
<div class="t" style="left:987.70px;top:533.99px;font-size:11.5px;line-height:11.5px;color:#545454;letter-spacing:0.003px;">03/10/2021, 9:31:35 PM</div>
<div class="t" style="left:1161.30px;top:533.99px;font-size:11.5px;line-height:11.5px;color:#545454;letter-spacing:0.056px;">File</div>
<div style="position:absolute;left:629px;top:574.8399999999999px;width:870px;height:1px;background:#e6e6e6;"></div>
<svg style="position:absolute;left:644.5px;top:557.08px" width="13" height="15" viewBox="0 0 13 15"><defs><linearGradient id="fg" x1="0" y1="0" x2="1" y2="1"><stop offset="0" stop-color="#ffffff"/><stop offset="1" stop-color="#dce9f7"/></linearGradient></defs><path d="M1,0.6 H7.6 L10.9,3.9 V13.6 H1 Z" fill="url(#fg)" stroke="#6482a3" stroke-width="1.05"/><path d="M7.6,0.9 V3.9 H10.6" fill="none" stroke="#a9bdd0" stroke-width="0.9"/></svg>
<div class="t" style="left:662.50px;top:558.05px;font-size:11.5px;line-height:11.5px;color:#545454;letter-spacing:0.062px;">pr</div>
<div class="t" style="left:717.50px;top:558.05px;font-size:11.5px;line-height:11.5px;color:#545454;letter-spacing:-0.014px;">10_1-00000...</div>
<div class="t" style="left:904.63px;top:558.05px;font-size:11.5px;line-height:11.5px;color:#545454;letter-spacing:0.376px;">4,800.5 KB</div>
<div class="t" style="left:987.70px;top:558.05px;font-size:11.5px;line-height:11.5px;color:#545454;letter-spacing:0.142px;">03/10/2021, 9:40:59 PM</div>
<div class="t" style="left:1161.30px;top:558.05px;font-size:11.5px;line-height:11.5px;color:#545454;letter-spacing:0.056px;">File</div>
<div style="position:absolute;left:629px;top:598.8999999999999px;width:870px;height:1px;background:#e6e6e6;"></div>
<svg style="position:absolute;left:643.6px;top:582.4399999999999px" width="15" height="12" viewBox="0 0 15 12"><rect x="0.6" y="4.4" width="12.6" height="6.2" rx="1.2" fill="#e6e6e6" stroke="#68717b" stroke-width="1"/><line x1="1.5" y1="8.4" x2="12.3" y2="8.4" stroke="#fafafa" stroke-width="1"/><rect x="9" y="5.8" width="2" height="1.3" fill="#66c24a"/><rect x="2.6" y="0.5" width="3.8" height="3.5" rx="0.8" fill="#5aa2ea" stroke="#1f64c0" stroke-width="0.9"/><rect x="1.1" y="3.3" width="3.8" height="3.5" rx="0.8" fill="#5aa2ea" stroke="#1f64c0" stroke-width="0.9"/><rect x="4.6" y="3" width="3.8" height="3.5" rx="0.8" fill="#5aa2ea" stroke="#1f64c0" stroke-width="0.9"/></svg>
<div class="t" style="left:662.50px;top:582.11px;font-size:11.5px;line-height:11.5px;color:#545454;letter-spacing:0.062px;">pr</div>
<div class="t" style="left:717.50px;top:582.11px;font-size:11.5px;line-height:11.5px;color:#545454;letter-spacing:-0.014px;">10_1-00000...</div>
<div class="t" style="left:917.88px;top:582.11px;font-size:11.5px;line-height:11.5px;color:#545454;letter-spacing:0.013px;">1,024 KB</div>
<div class="t" style="left:987.70px;top:582.11px;font-size:11.5px;line-height:11.5px;color:#545454;letter-spacing:0.142px;">03/10/2021, 9:40:59 PM</div>
<div class="t" style="left:1161.30px;top:582.11px;font-size:11.5px;line-height:11.5px;color:#545454;letter-spacing:0.071px;">Virtual Disk</div>
<div style="position:absolute;left:629px;top:622.9599999999999px;width:870px;height:1px;background:#e6e6e6;"></div>
<svg style="position:absolute;left:644.5px;top:605.1999999999999px" width="13" height="15" viewBox="0 0 13 15"><defs><linearGradient id="fg" x1="0" y1="0" x2="1" y2="1"><stop offset="0" stop-color="#ffffff"/><stop offset="1" stop-color="#dce9f7"/></linearGradient></defs><path d="M1,0.6 H7.6 L10.9,3.9 V13.6 H1 Z" fill="url(#fg)" stroke="#6482a3" stroke-width="1.05"/><path d="M7.6,0.9 V3.9 H10.6" fill="none" stroke="#a9bdd0" stroke-width="0.9"/></svg>
<div class="t" style="left:662.50px;top:606.17px;font-size:11.5px;line-height:11.5px;color:#545454;letter-spacing:0.062px;">pr</div>
<div class="t" style="left:717.50px;top:606.17px;font-size:11.5px;line-height:11.5px;color:#545454;letter-spacing:-0.014px;">10_1-00000...</div>
<div class="t" style="left:904.63px;top:606.17px;font-size:11.5px;line-height:11.5px;color:#545454;letter-spacing:0.376px;">4,800.5 KB</div>
<div class="t" style="left:987.70px;top:606.17px;font-size:11.5px;line-height:11.5px;color:#545454;letter-spacing:-0.058px;">03/11/2021, 10:09:06 PM</div>
<div class="t" style="left:1161.30px;top:606.17px;font-size:11.5px;line-height:11.5px;color:#545454;letter-spacing:0.056px;">File</div>
<div style="position:absolute;left:629px;top:647.02px;width:870px;height:1px;background:#e6e6e6;"></div>
<svg style="position:absolute;left:643.6px;top:630.56px" width="15" height="12" viewBox="0 0 15 12"><rect x="0.6" y="4.4" width="12.6" height="6.2" rx="1.2" fill="#e6e6e6" stroke="#68717b" stroke-width="1"/><line x1="1.5" y1="8.4" x2="12.3" y2="8.4" stroke="#fafafa" stroke-width="1"/><rect x="9" y="5.8" width="2" height="1.3" fill="#66c24a"/><rect x="2.6" y="0.5" width="3.8" height="3.5" rx="0.8" fill="#5aa2ea" stroke="#1f64c0" stroke-width="0.9"/><rect x="1.1" y="3.3" width="3.8" height="3.5" rx="0.8" fill="#5aa2ea" stroke="#1f64c0" stroke-width="0.9"/><rect x="4.6" y="3" width="3.8" height="3.5" rx="0.8" fill="#5aa2ea" stroke="#1f64c0" stroke-width="0.9"/></svg>
<div class="t" style="left:662.50px;top:630.23px;font-size:11.5px;line-height:11.5px;color:#545454;letter-spacing:0.062px;">pr</div>
<div class="t" style="left:717.50px;top:630.23px;font-size:11.5px;line-height:11.5px;color:#545454;letter-spacing:-0.014px;">10_1-00000...</div>
<div class="t" style="left:907.63px;top:630.23px;font-size:11.5px;line-height:11.5px;color:#545454;letter-spacing:0.440px;">25,600 KB</div>
<div class="t" style="left:987.70px;top:630.23px;font-size:11.5px;line-height:11.5px;color:#545454;letter-spacing:0.070px;">03/11/2021, 8:09:05 AM</div>
<div class="t" style="left:1161.30px;top:630.23px;font-size:11.5px;line-height:11.5px;color:#545454;letter-spacing:0.071px;">Virtual Disk</div>
<div style="position:absolute;left:629px;top:671.0799999999999px;width:870px;height:1px;background:#e6e6e6;"></div>
<svg style="position:absolute;left:644.5px;top:653.32px" width="13" height="15" viewBox="0 0 13 15"><defs><linearGradient id="fg" x1="0" y1="0" x2="1" y2="1"><stop offset="0" stop-color="#ffffff"/><stop offset="1" stop-color="#dce9f7"/></linearGradient></defs><path d="M1,0.6 H7.6 L10.9,3.9 V13.6 H1 Z" fill="url(#fg)" stroke="#6482a3" stroke-width="1.05"/><path d="M7.6,0.9 V3.9 H10.6" fill="none" stroke="#a9bdd0" stroke-width="0.9"/></svg>
<div class="t" style="left:662.50px;top:654.29px;font-size:11.5px;line-height:11.5px;color:#545454;letter-spacing:0.062px;">pr</div>
<div class="t" style="left:717.50px;top:654.29px;font-size:11.5px;line-height:11.5px;color:#545454;letter-spacing:-0.076px;">l0_1-ctk.vmdk</div>
<div class="t" style="left:904.63px;top:654.29px;font-size:11.5px;line-height:11.5px;color:#545454;letter-spacing:0.376px;">4,800.5 KB</div>
<div class="t" style="left:987.70px;top:654.29px;font-size:11.5px;line-height:11.5px;color:#545454;letter-spacing:0.070px;">03/11/2021, 8:09:03 AM</div>
<div class="t" style="left:1161.30px;top:654.29px;font-size:11.5px;line-height:11.5px;color:#545454;letter-spacing:0.056px;">File</div>
<div style="position:absolute;left:629px;top:695.1399999999999px;width:870px;height:1px;background:#e6e6e6;"></div>
<svg style="position:absolute;left:643.6px;top:678.68px" width="15" height="12" viewBox="0 0 15 12"><rect x="0.6" y="4.4" width="12.6" height="6.2" rx="1.2" fill="#e6e6e6" stroke="#68717b" stroke-width="1"/><line x1="1.5" y1="8.4" x2="12.3" y2="8.4" stroke="#fafafa" stroke-width="1"/><rect x="9" y="5.8" width="2" height="1.3" fill="#66c24a"/><rect x="2.6" y="0.5" width="3.8" height="3.5" rx="0.8" fill="#5aa2ea" stroke="#1f64c0" stroke-width="0.9"/><rect x="1.1" y="3.3" width="3.8" height="3.5" rx="0.8" fill="#5aa2ea" stroke="#1f64c0" stroke-width="0.9"/><rect x="4.6" y="3" width="3.8" height="3.5" rx="0.8" fill="#5aa2ea" stroke="#1f64c0" stroke-width="0.9"/></svg>
<div class="t" style="left:662.50px;top:678.35px;font-size:11.5px;line-height:11.5px;color:#545454;letter-spacing:0.062px;">pr</div>
<div class="t" style="left:717.50px;top:678.35px;font-size:11.5px;line-height:11.5px;color:#545454;letter-spacing:-0.389px;">10_1.vmdk</div>
<div class="t" style="left:878.91px;top:678.35px;font-size:11.5px;line-height:11.5px;color:#545454;letter-spacing:0.279px;">314,572,800 KB</div>
<div class="t" style="left:987.70px;top:678.35px;font-size:11.5px;line-height:11.5px;color:#545454;letter-spacing:0.142px;">03/10/2021, 9:49:52 PM</div>
<div class="t" style="left:1161.30px;top:678.35px;font-size:11.5px;line-height:11.5px;color:#545454;letter-spacing:0.071px;">Virtual Disk</div>
<div style="position:absolute;left:629px;top:719.1999999999999px;width:870px;height:1px;background:#e6e6e6;"></div>
<svg style="position:absolute;left:644.5px;top:701.4399999999999px" width="13" height="15" viewBox="0 0 13 15"><defs><linearGradient id="fg" x1="0" y1="0" x2="1" y2="1"><stop offset="0" stop-color="#ffffff"/><stop offset="1" stop-color="#dce9f7"/></linearGradient></defs><path d="M1,0.6 H7.6 L10.9,3.9 V13.6 H1 Z" fill="url(#fg)" stroke="#6482a3" stroke-width="1.05"/><path d="M7.6,0.9 V3.9 H10.6" fill="none" stroke="#a9bdd0" stroke-width="0.9"/></svg>
<div class="t" style="left:662.50px;top:702.41px;font-size:11.5px;line-height:11.5px;color:#545454;letter-spacing:0.062px;">pr</div>
<div class="t" style="left:717.50px;top:702.41px;font-size:11.5px;line-height:11.5px;color:#545454;letter-spacing:-0.184px;">10_11-0000...</div>
<div class="t" style="left:904.63px;top:702.41px;font-size:11.5px;line-height:11.5px;color:#545454;letter-spacing:0.376px;">6,400.5 KB</div>
<div class="t" style="left:987.70px;top:702.41px;font-size:11.5px;line-height:11.5px;color:#545454;letter-spacing:0.003px;">03/10/2021, 9:41:00 PM</div>
<div class="t" style="left:1161.30px;top:702.41px;font-size:11.5px;line-height:11.5px;color:#545454;letter-spacing:0.056px;">File</div>
<div style="position:absolute;left:629px;top:743.26px;width:870px;height:1px;background:#e6e6e6;"></div>
<svg style="position:absolute;left:643.6px;top:726.8px" width="15" height="12" viewBox="0 0 15 12"><rect x="0.6" y="4.4" width="12.6" height="6.2" rx="1.2" fill="#e6e6e6" stroke="#68717b" stroke-width="1"/><line x1="1.5" y1="8.4" x2="12.3" y2="8.4" stroke="#fafafa" stroke-width="1"/><rect x="9" y="5.8" width="2" height="1.3" fill="#66c24a"/><rect x="2.6" y="0.5" width="3.8" height="3.5" rx="0.8" fill="#5aa2ea" stroke="#1f64c0" stroke-width="0.9"/><rect x="1.1" y="3.3" width="3.8" height="3.5" rx="0.8" fill="#5aa2ea" stroke="#1f64c0" stroke-width="0.9"/><rect x="4.6" y="3" width="3.8" height="3.5" rx="0.8" fill="#5aa2ea" stroke="#1f64c0" stroke-width="0.9"/></svg>
<div class="t" style="left:662.50px;top:726.47px;font-size:11.5px;line-height:11.5px;color:#545454;letter-spacing:0.062px;">pr</div>
<div class="t" style="left:717.50px;top:726.47px;font-size:11.5px;line-height:11.5px;color:#545454;letter-spacing:-0.184px;">10_11-0000...</div>
<div class="t" style="left:917.88px;top:726.47px;font-size:11.5px;line-height:11.5px;color:#545454;letter-spacing:0.013px;">1,024 KB</div>
<div class="t" style="left:987.70px;top:726.47px;font-size:11.5px;line-height:11.5px;color:#545454;letter-spacing:0.003px;">03/10/2021, 9:41:00 PM</div>
<div class="t" style="left:1161.30px;top:726.47px;font-size:11.5px;line-height:11.5px;color:#545454;letter-spacing:0.071px;">Virtual Disk</div>
<div style="position:absolute;left:629px;top:767.3199999999999px;width:870px;height:1px;background:#e6e6e6;"></div>
<svg style="position:absolute;left:644.5px;top:749.5600000000001px" width="13" height="15" viewBox="0 0 13 15"><defs><linearGradient id="fg" x1="0" y1="0" x2="1" y2="1"><stop offset="0" stop-color="#ffffff"/><stop offset="1" stop-color="#dce9f7"/></linearGradient></defs><path d="M1,0.6 H7.6 L10.9,3.9 V13.6 H1 Z" fill="url(#fg)" stroke="#6482a3" stroke-width="1.05"/><path d="M7.6,0.9 V3.9 H10.6" fill="none" stroke="#a9bdd0" stroke-width="0.9"/></svg>
<div class="t" style="left:662.50px;top:750.53px;font-size:11.5px;line-height:11.5px;color:#545454;letter-spacing:0.062px;">pr</div>
<div class="t" style="left:717.50px;top:750.53px;font-size:11.5px;line-height:11.5px;color:#545454;letter-spacing:-0.184px;">10_11-0000...</div>
<div class="t" style="left:904.63px;top:750.53px;font-size:11.5px;line-height:11.5px;color:#545454;letter-spacing:0.376px;">6,400.5 KB</div>
<div class="t" style="left:987.70px;top:750.53px;font-size:11.5px;line-height:11.5px;color:#545454;letter-spacing:-0.058px;">03/11/2021, 10:09:06 PM</div>
<div class="t" style="left:1161.30px;top:750.53px;font-size:11.5px;line-height:11.5px;color:#545454;letter-spacing:0.056px;">File</div>
<div style="position:absolute;left:629px;top:791.3799999999999px;width:870px;height:1px;background:#e6e6e6;"></div>
<svg style="position:absolute;left:643.6px;top:774.92px" width="15" height="12" viewBox="0 0 15 12"><rect x="0.6" y="4.4" width="12.6" height="6.2" rx="1.2" fill="#e6e6e6" stroke="#68717b" stroke-width="1"/><line x1="1.5" y1="8.4" x2="12.3" y2="8.4" stroke="#fafafa" stroke-width="1"/><rect x="9" y="5.8" width="2" height="1.3" fill="#66c24a"/><rect x="2.6" y="0.5" width="3.8" height="3.5" rx="0.8" fill="#5aa2ea" stroke="#1f64c0" stroke-width="0.9"/><rect x="1.1" y="3.3" width="3.8" height="3.5" rx="0.8" fill="#5aa2ea" stroke="#1f64c0" stroke-width="0.9"/><rect x="4.6" y="3" width="3.8" height="3.5" rx="0.8" fill="#5aa2ea" stroke="#1f64c0" stroke-width="0.9"/></svg>
<div class="t" style="left:662.50px;top:774.59px;font-size:11.5px;line-height:11.5px;color:#545454;letter-spacing:0.062px;">pr</div>
<div class="t" style="left:717.50px;top:774.59px;font-size:11.5px;line-height:11.5px;color:#545454;letter-spacing:-0.184px;">10_11-0000...</div>
<div class="t" style="left:917.88px;top:774.59px;font-size:11.5px;line-height:11.5px;color:#545454;letter-spacing:0.013px;">1,024 KB</div>
<div class="t" style="left:987.70px;top:774.59px;font-size:11.5px;line-height:11.5px;color:#545454;letter-spacing:0.070px;">03/11/2021, 8:09:05 AM</div>
<div class="t" style="left:1161.30px;top:774.59px;font-size:11.5px;line-height:11.5px;color:#545454;letter-spacing:0.071px;">Virtual Disk</div>
<div style="position:absolute;left:629px;top:815.4399999999999px;width:870px;height:1px;background:#e6e6e6;"></div>
<svg style="position:absolute;left:644.5px;top:797.68px" width="13" height="15" viewBox="0 0 13 15"><defs><linearGradient id="fg" x1="0" y1="0" x2="1" y2="1"><stop offset="0" stop-color="#ffffff"/><stop offset="1" stop-color="#dce9f7"/></linearGradient></defs><path d="M1,0.6 H7.6 L10.9,3.9 V13.6 H1 Z" fill="url(#fg)" stroke="#6482a3" stroke-width="1.05"/><path d="M7.6,0.9 V3.9 H10.6" fill="none" stroke="#a9bdd0" stroke-width="0.9"/></svg>
<div class="t" style="left:662.50px;top:798.65px;font-size:11.5px;line-height:11.5px;color:#545454;letter-spacing:0.062px;">pr</div>
<div class="t" style="left:717.50px;top:798.65px;font-size:11.5px;line-height:11.5px;color:#545454;letter-spacing:-0.361px;">10_11-ctk.vm...</div>
<div class="t" style="left:904.63px;top:798.65px;font-size:11.5px;line-height:11.5px;color:#545454;letter-spacing:0.376px;">6,400.5 KB</div>
<div class="t" style="left:987.70px;top:798.65px;font-size:11.5px;line-height:11.5px;color:#545454;letter-spacing:0.070px;">03/11/2021, 8:09:03 AM</div>
<div class="t" style="left:1161.30px;top:798.65px;font-size:11.5px;line-height:11.5px;color:#545454;letter-spacing:0.056px;">File</div>
<div style="position:absolute;left:1499px;top:239px;width:15px;height:576px;background:#ffffff;border-left:1px solid #d6d6d6;box-sizing:border-box;"></div>
<svg style="position:absolute;left:1500px;top:239px" width="14" height="16" viewBox="0 0 14 16"><polyline points="3,10 7,6 11,10" fill="none" stroke="#606060" stroke-width="1.3"/></svg>
<div style="position:absolute;left:1499px;top:255px;width:15px;height:200px;background:#d8d8d8;border-left:1px solid #b9b9b9;border-top:1px solid #c6c6c6;border-bottom:1px solid #c6c6c6;box-sizing:border-box;"></div>
<svg style="position:absolute;left:1502px;top:350px" width="10" height="9" viewBox="0 0 10 9"><path d="M1,1.5 H9 M1,4 H9 M1,6.5 H9" stroke="#707070" stroke-width="1.2"/></svg>
<div style="position:absolute;left:1499px;top:799px;width:15px;height:16px;background:#ffffff;border-left:1px solid #d6d6d6;border-top:1px solid #d6d6d6;box-sizing:border-box;"></div>
<svg style="position:absolute;left:1500px;top:799px" width="14" height="16" viewBox="0 0 14 16"><polyline points="3,6 7,10 11,6" fill="none" stroke="#606060" stroke-width="1.3"/></svg>
<div style="position:absolute;left:629px;top:815px;width:885px;height:1px;background:#e0e0e0;"></div>
<div class="t" style="left:1456.82px;top:820.29px;font-size:11px;line-height:11px;color:#565656;letter-spacing:0.151px;">62 items</div>
<div style="position:absolute;left:327px;top:841px;width:1187px;height:1px;background:#e3e3e3;"></div>
<div style="position:absolute;left:1013.3px;top:218.5px;width:268.3px;height:20px;background:#f0f1f6;border:1px solid #8a8a8a;box-sizing:border-box;"></div>
<div class="t" style="left:1020.80px;top:223.73px;font-size:11.3px;line-height:11.3px;color:#1e1e1e;letter-spacing:-0.084px;">Register an existing virtual machine in the inventory.</div>
<div style="position:absolute;left:0px;top:849px;width:1534px;height:9px;background:linear-gradient(#fafafa,#f7f7f7 40%,#e2e2e2);"></div>
<div style="position:absolute;left:0px;top:858px;width:1534px;height:205px;background:#ffffff;"></div>
<div class="t" style="left:11.50px;top:869.35px;font-size:14px;line-height:14px;color:#313131;letter-spacing:-0.038px;">Recent Tasks</div>
<div class="t" style="left:124.40px;top:869.35px;font-size:14px;line-height:14px;color:#747474;letter-spacing:0.060px;">Alarms</div>
<div style="position:absolute;left:8px;top:890px;width:89px;height:3px;background:#0079b8;"></div>
<svg style="position:absolute;left:1513px;top:867px" width="13" height="14" viewBox="0 0 13 14"><polyline points="1.5,2 6.2,6.5 11,2" fill="none" stroke="#1d8fd3" stroke-width="1.5"/><polyline points="1.5,7 6.2,11.5 11,7" fill="none" stroke="#1d8fd3" stroke-width="1.5"/></svg>
<div style="position:absolute;left:0px;top:891.5px;width:1534px;height:1.5px;background:#cccccc;"></div>
<div style="position:absolute;left:0px;top:893px;width:1534px;height:21px;background:#fafafa;"></div>
<div style="position:absolute;left:0px;top:914px;width:1534px;height:2px;background:#d9d9d9;"></div>
<div class="t" style="left:11.20px;top:898.69px;font-size:11px;line-height:11px;color:#565656;letter-spacing:-0.110px;font-weight:bold;">Task Name</div>
<svg style="position:absolute;left:90.8px;top:901px" width="9" height="6" viewBox="0 0 9 6"><polyline points="0.8,0.8 4.2,4.5 7.8,0.8" fill="none" stroke="#666" stroke-width="1.1"/></svg>
<div style="position:absolute;left:105.3px;top:893px;width:1px;height:21px;background:#e0e0e0;"></div>
<div class="t" style="left:117.20px;top:898.69px;font-size:11px;line-height:11px;color:#565656;letter-spacing:-0.032px;font-weight:bold;">Target</div>
<svg style="position:absolute;left:321px;top:901px" width="9" height="6" viewBox="0 0 9 6"><polyline points="0.8,0.8 4.2,4.5 7.8,0.8" fill="none" stroke="#666" stroke-width="1.1"/></svg>
<div style="position:absolute;left:335.2px;top:893px;width:1px;height:21px;background:#e0e0e0;"></div>
<div class="t" style="left:346.40px;top:898.69px;font-size:11px;line-height:11px;color:#565656;letter-spacing:-0.168px;font-weight:bold;">Status</div>
<svg style="position:absolute;left:857px;top:901px" width="9" height="6" viewBox="0 0 9 6"><polyline points="0.8,0.8 4.2,4.5 7.8,0.8" fill="none" stroke="#666" stroke-width="1.1"/></svg>
<div style="position:absolute;left:871.6px;top:893px;width:1px;height:21px;background:#e0e0e0;"></div>
<div class="t" style="left:883.40px;top:898.69px;font-size:11px;line-height:11px;color:#565656;letter-spacing:-0.155px;font-weight:bold;">Details</div>
<svg style="position:absolute;left:964px;top:901px" width="9" height="6" viewBox="0 0 9 6"><polyline points="0.8,0.8 4.2,4.5 7.8,0.8" fill="none" stroke="#666" stroke-width="1.1"/></svg>
<div style="position:absolute;left:978.75px;top:893px;width:1px;height:21px;background:#e0e0e0;"></div>
<div class="t" style="left:990.60px;top:898.69px;font-size:11px;line-height:11px;color:#565656;letter-spacing:-0.134px;font-weight:bold;">Initiator</div>
<svg style="position:absolute;left:1072px;top:901px" width="9" height="6" viewBox="0 0 9 6"><polyline points="0.8,0.8 4.2,4.5 7.8,0.8" fill="none" stroke="#666" stroke-width="1.1"/></svg>
<div style="position:absolute;left:1086.6px;top:893px;width:1px;height:21px;background:#e0e0e0;"></div>
<div class="t" style="left:1098.40px;top:898.69px;font-size:11px;line-height:11px;color:#565656;letter-spacing:-0.191px;font-weight:bold;">Queued For</div>
<svg style="position:absolute;left:1179.7px;top:901px" width="9" height="6" viewBox="0 0 9 6"><polyline points="0.8,0.8 4.2,4.5 7.8,0.8" fill="none" stroke="#666" stroke-width="1.1"/></svg>
<div style="position:absolute;left:1194.4px;top:893px;width:1px;height:21px;background:#e0e0e0;"></div>
<div class="t" style="left:1206.00px;top:898.69px;font-size:11px;line-height:11px;color:#565656;letter-spacing:-0.184px;font-weight:bold;">Start Time...</div>
<svg style="position:absolute;left:1287px;top:901px" width="9" height="6" viewBox="0 0 9 6"><polyline points="0.8,0.8 4.2,4.5 7.8,0.8" fill="none" stroke="#666" stroke-width="1.1"/></svg>
<div style="position:absolute;left:1302.2px;top:893px;width:1px;height:21px;background:#e0e0e0;"></div>
<div class="t" style="left:1313.00px;top:898.69px;font-size:11px;line-height:11px;color:#565656;letter-spacing:-0.206px;font-weight:bold;">Completion ...</div>
<svg style="position:absolute;left:1394.5px;top:901px" width="9" height="6" viewBox="0 0 9 6"><polyline points="0.8,0.8 4.2,4.5 7.8,0.8" fill="none" stroke="#666" stroke-width="1.1"/></svg>
<div style="position:absolute;left:1409px;top:893px;width:1px;height:21px;background:#e0e0e0;"></div>
<div class="t" style="left:1421.20px;top:898.69px;font-size:11px;line-height:11px;color:#565656;letter-spacing:-0.171px;font-weight:bold;">Server</div>
<svg style="position:absolute;left:1503px;top:901px" width="9" height="6" viewBox="0 0 9 6"><polyline points="0.8,0.8 4.2,4.5 7.8,0.8" fill="none" stroke="#666" stroke-width="1.1"/></svg>
<div class="t" style="left:10.50px;top:921.14px;font-size:12px;line-height:12px;color:#565656;letter-spacing:-0.166px;">Unregister</div>
<div class="t" style="left:10.50px;top:942.84px;font-size:12px;line-height:12px;color:#565656;letter-spacing:-0.166px;">virtual machine</div>
<svg style="position:absolute;left:121.5px;top:929.5px" width="15" height="15" viewBox="0 0 15 15"><rect x="4.5" y="0.6" width="7.5" height="7" fill="#fff" stroke="#4d7090" stroke-width="1.1"/><rect x="0.6" y="5" width="8" height="9" fill="#fff" stroke="#4d7090" stroke-width="1.1"/><rect x="8.6" y="5" width="4.5" height="7.5" fill="#fff" stroke="#4d7090" stroke-width="1.1"/><line x1="4.6" y1="7" x2="4.6" y2="14" stroke="#bbb" stroke-width="0.8"/></svg>
<div class="t" style="left:142.20px;top:931.64px;font-size:12px;line-height:12px;color:#3a8ad0;letter-spacing:-0.160px;">pr</div>
<div class="t" style="left:197.00px;top:931.64px;font-size:12px;line-height:12px;color:#3a8ad0;letter-spacing:-1.008px;">10</div>
<svg style="position:absolute;left:352.5px;top:931px" width="14" height="12" viewBox="0 0 14 12"><polyline points="1.2,6 5,10 12.5,1.2" fill="none" stroke="#6ab33a" stroke-width="1.8"/></svg>
<div class="t" style="left:371.60px;top:931.84px;font-size:12px;line-height:12px;color:#565656;letter-spacing:0.114px;">Completed</div>
<div class="t" style="left:1098.40px;top:931.84px;font-size:12px;line-height:12px;color:#565656;letter-spacing:-0.032px;">3 ms</div>
<div class="t" style="left:1206.00px;top:921.74px;font-size:12px;line-height:12px;color:#565656;letter-spacing:-0.495px;">03/11/2021,</div>
<div class="t" style="left:1206.00px;top:943.59px;font-size:12px;line-height:12px;color:#565656;letter-spacing:-0.675px;">10:19:14 PM</div>
<div class="t" style="left:1313.00px;top:921.74px;font-size:12px;line-height:12px;color:#565656;letter-spacing:-0.495px;">03/11/2021,</div>
<div class="t" style="left:1313.00px;top:943.59px;font-size:12px;line-height:12px;color:#565656;letter-spacing:-0.675px;">10:19:14 PM</div>
<div style="position:absolute;left:0px;top:961px;width:1516px;height:1px;background:#e3e3e3;"></div>
<div style="position:absolute;left:1517px;top:916px;width:16px;height:119px;background:#ffffff;border:1px solid #d6d6d6;box-sizing:border-box;"></div>
<svg style="position:absolute;left:1517px;top:916px" width="16" height="16" viewBox="0 0 16 16"><polyline points="4,10 8,6 12,10" fill="none" stroke="#606060" stroke-width="1.3"/></svg>
<div style="position:absolute;left:1517px;top:932px;width:16px;height:15px;background:#d6d6d6;border:1px solid #c4c4c4;box-sizing:border-box;"></div>
<div style="position:absolute;left:1517px;top:1019px;width:16px;height:1px;background:#d6d6d6;"></div>
<svg style="position:absolute;left:1517px;top:1019px" width="16" height="16" viewBox="0 0 16 16"><polyline points="4,6 8,10 12,6" fill="none" stroke="#606060" stroke-width="1.3"/></svg>
<div style="position:absolute;left:0px;top:1035px;width:1534px;height:1px;background:#dcdcdc;"></div>
<div style="position:absolute;left:0px;top:1036px;width:1534px;height:25px;background:#fafafa;"></div>
<div class="t" style="left:1462.60px;top:1043.24px;font-size:12px;line-height:12px;color:#3a8fd6;letter-spacing:-0.437px;">More Tasks</div>
<div style="position:absolute;left:0px;top:1061px;width:1534px;height:1px;background:#d4d4d4;"></div>
<div style="position:absolute;left:0px;top:1062px;width:1534px;height:1px;background:#f0f0f0;"></div>
</body></html>
